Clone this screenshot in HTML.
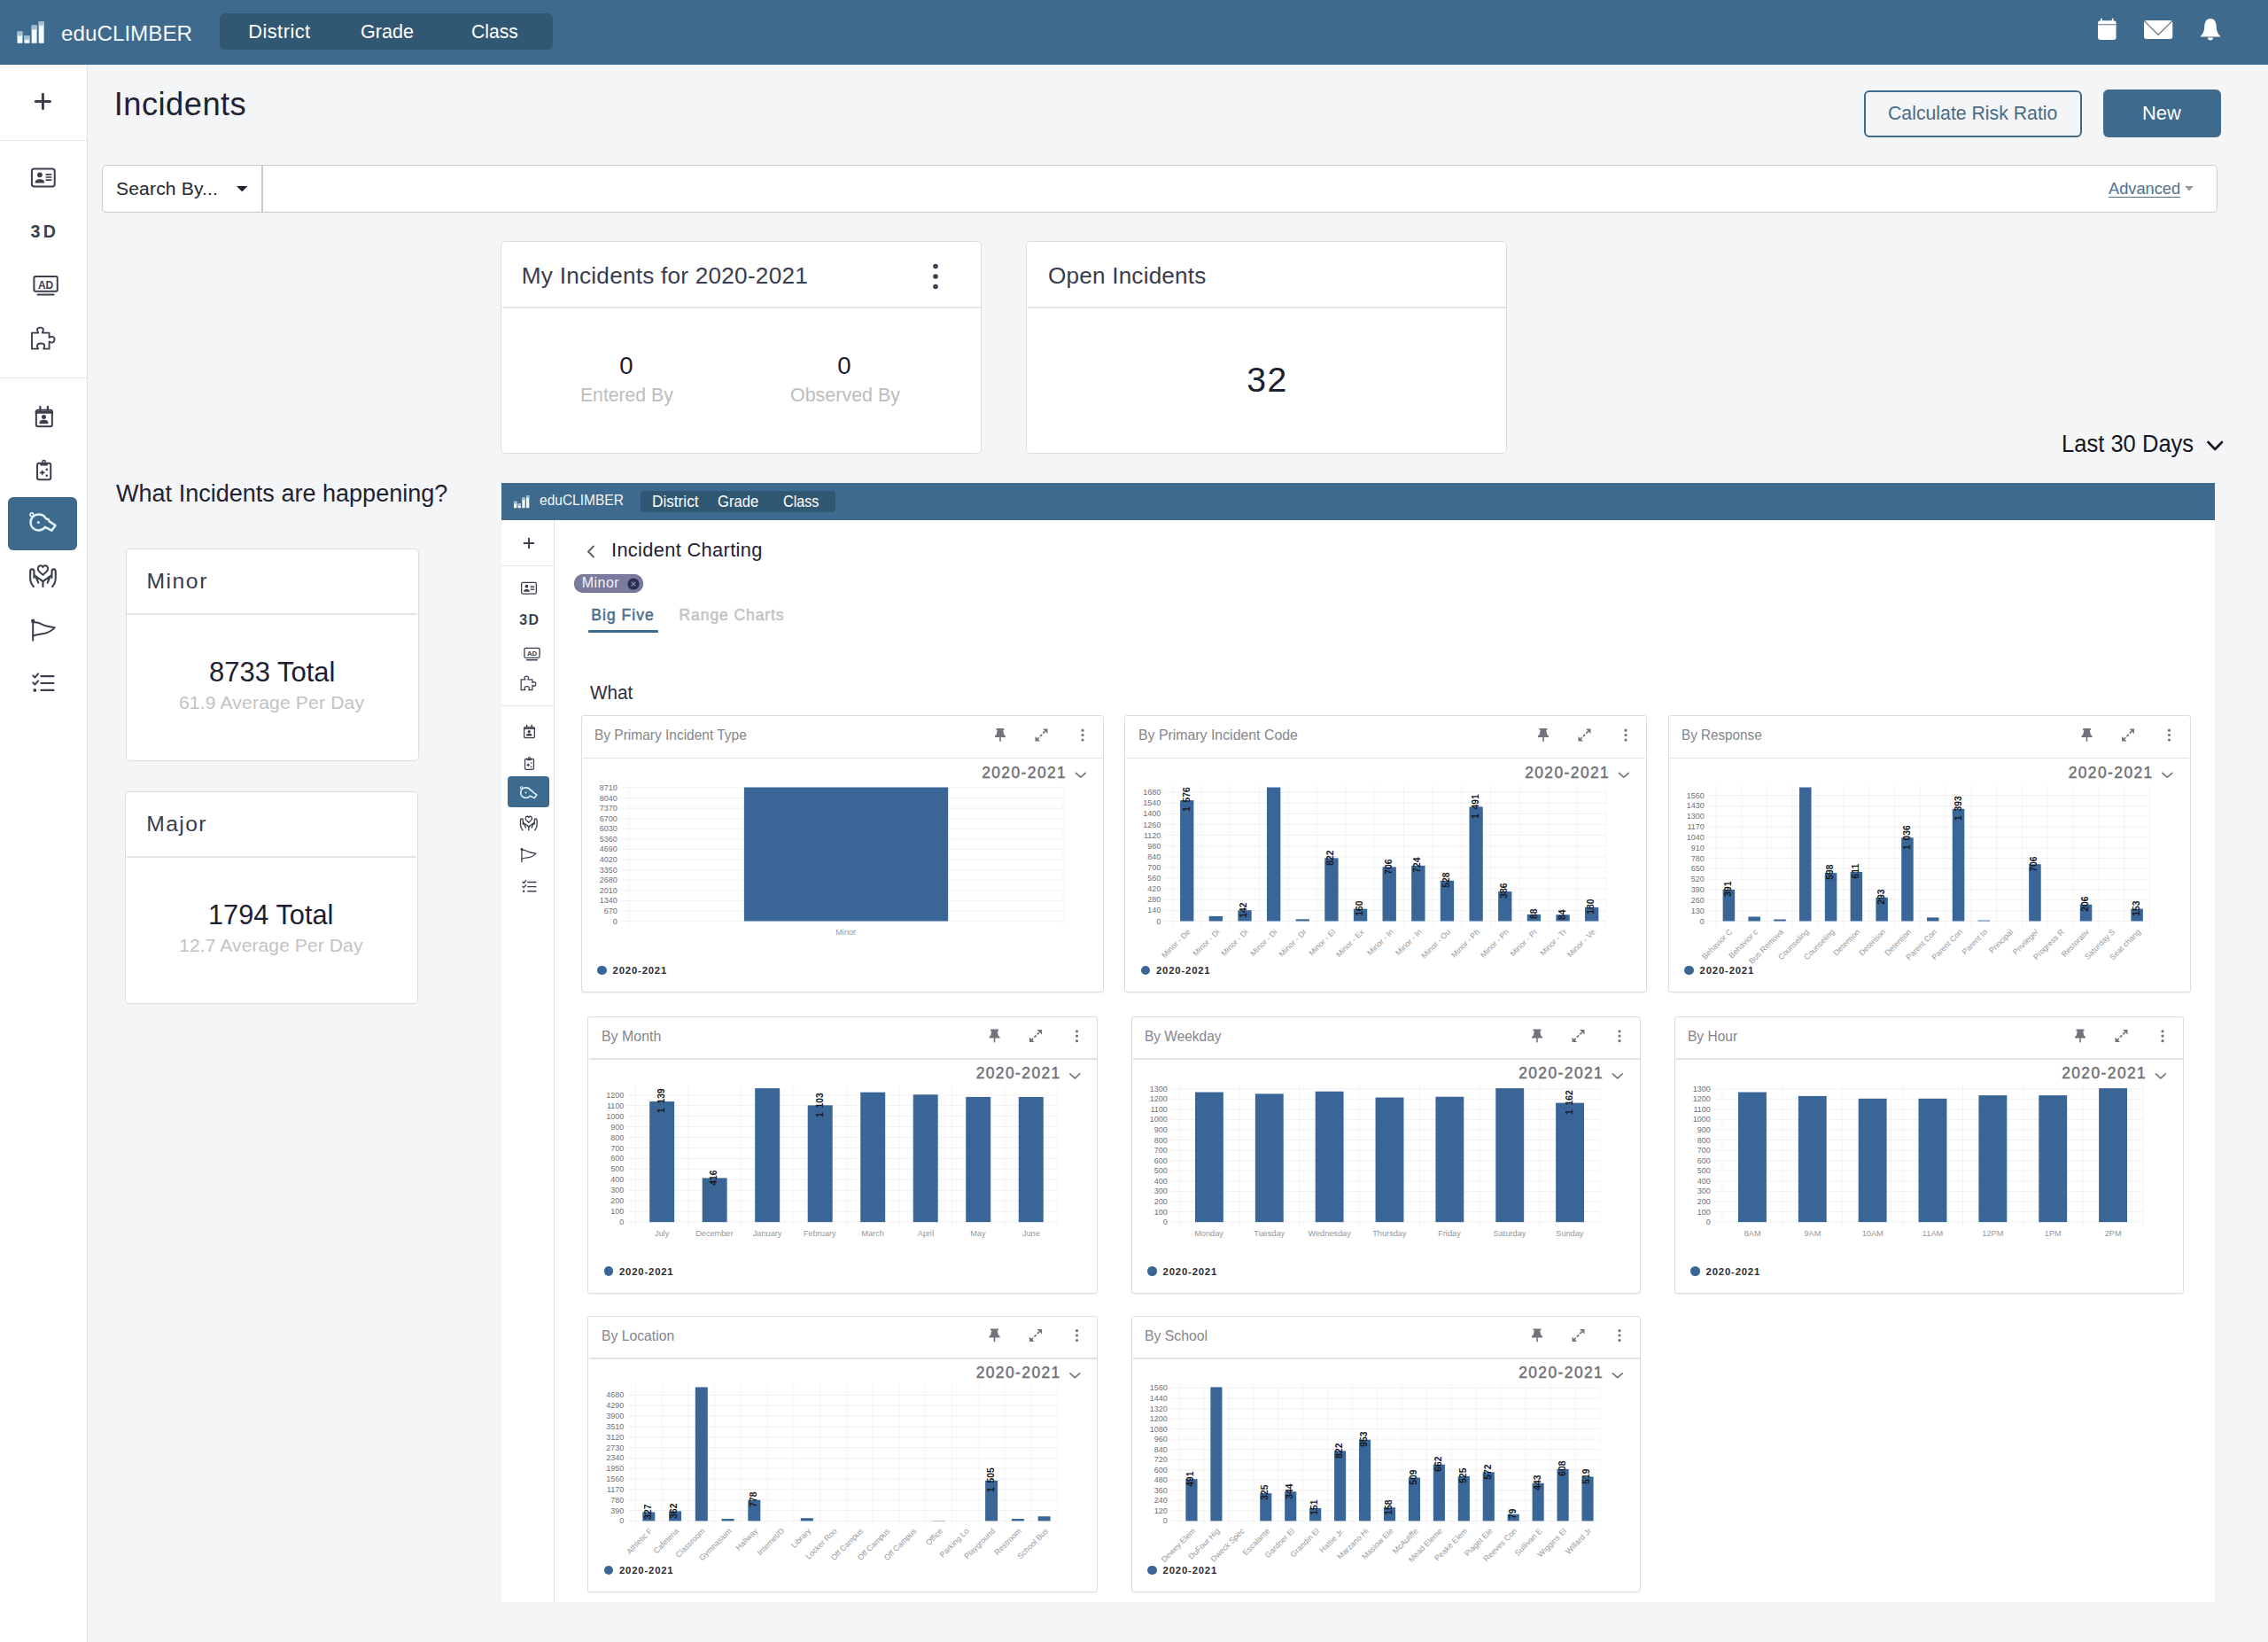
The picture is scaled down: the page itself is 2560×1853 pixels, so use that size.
<!DOCTYPE html><html><head><meta charset="utf-8"><style>
html,body{margin:0;padding:0}
body{width:2560px;height:1853px;overflow:hidden;position:relative;background:#f4f5f7;font-family:"Liberation Sans",sans-serif}
.t{position:absolute;white-space:nowrap;line-height:1;font-family:"Liberation Sans",sans-serif}
svg{overflow:visible}
</style></head><body>
<div style="position:absolute;left:0px;top:0px;width:2560px;height:73px;background:#3e6a8d"></div>
<svg style="position:absolute;left:15px;top:20px;" width="40" height="32" viewBox="0 0 40 32"><defs><linearGradient id="lg" x1="0" y1="0" x2="0" y2="1"><stop offset="0" stop-color="#98b9d3"/><stop offset="0.7" stop-color="#a9bfcf"/><stop offset="1" stop-color="#f2fbff"/></linearGradient></defs><rect x="4.5" y="15.6" width="5.9" height="13.200000000000001" rx="0.6" fill="#f4fbff"/><rect x="4.5" y="15.6" width="5.9" height="6" rx="0.6" fill="url(#lg)"/><rect x="12.5" y="20.0" width="5.9" height="8.8" rx="0.6" fill="#f4fbff"/><rect x="12.5" y="20.0" width="5.9" height="6" rx="0.6" fill="url(#lg)"/><rect x="20.7" y="8.4" width="5.9" height="20.4" rx="0.6" fill="#f4fbff"/><rect x="20.7" y="8.4" width="5.9" height="6" rx="0.6" fill="url(#lg)"/><rect x="28.7" y="3.9" width="5.9" height="24.900000000000002" rx="0.6" fill="#f4fbff"/><rect x="28.7" y="3.9" width="5.9" height="6" rx="0.6" fill="url(#lg)"/></svg>
<div class="t" style="left:68.98px;top:25.65px;font-size:24.71px;color:#f4f8fb;transform:scaleX(0.9805);transform-origin:0 0;">eduCLIMBER</div>
<div style="position:absolute;left:248px;top:15px;width:376px;height:41px;background:#315872;border-radius:6px"></div>
<div class="t" style="left:280.21px;top:25.01px;font-size:21.80px;color:#ffffff;letter-spacing:0.476px;">District</div>
<div class="t" style="left:406.92px;top:25.01px;font-size:21.80px;color:#ffffff;transform:scaleX(0.9908);transform-origin:0 0;">Grade</div>
<div class="t" style="left:531.94px;top:25.01px;font-size:21.80px;color:#ffffff;transform:scaleX(0.9686);transform-origin:0 0;">Class</div>
<svg style="position:absolute;left:2368px;top:20px;" width="21" height="25" viewBox="0 0 21 25"><rect x="0" y="3.2" width="20.6" height="21.7" rx="3" fill="#fff"/><rect x="3.2" y="0.4" width="1.6" height="4" rx="0.8" fill="#fff"/><rect x="15.9" y="0.4" width="1.6" height="4" rx="0.8" fill="#fff"/><rect x="0" y="7.1" width="20.6" height="1.2" fill="#7c8a96"/></svg>
<svg style="position:absolute;left:2420px;top:22.7px;" width="32.3" height="21" viewBox="0 0 32.3 21"><rect x="0" y="0" width="32.3" height="20.9" rx="3" fill="#fff"/><path d="M0.3 0.6 L16.15 16.3 L32 0.6" fill="none" stroke="#737a80" stroke-width="1.3"/></svg>
<svg style="position:absolute;left:2483px;top:20.5px;" width="24" height="25" viewBox="0 0 24 25"><path d="M12 0 C7.2 0 5.4 4.2 5.2 9.5 C5 14.5 3.6 17 0.4 20.4 L23.6 20.4 C20.4 17 19 14.5 18.8 9.5 C18.6 4.2 16.8 0 12 0Z" fill="#fff"/><path d="M8.9 21.4 H15.1 C15.1 23.2 13.8 24.5 12 24.5 C10.2 24.5 8.9 23.2 8.9 21.4Z" fill="#fff"/></svg>
<div style="position:absolute;left:0px;top:73px;width:98px;height:1780px;background:#fff;border-right:1px solid #e2e3e6"></div>
<div style="position:absolute;left:0px;top:158px;width:98px;height:1px;background:#e2e3e6"></div>
<div style="position:absolute;left:0px;top:426px;width:98px;height:1px;background:#e2e3e6"></div>
<div style="position:absolute;left:9px;top:561px;width:78px;height:60px;background:#3e6a8d;border-radius:6px"></div>
<svg style="position:absolute;left:0;top:0" width="2560" height="1853"><g transform="translate(48.4,114.4) scale(1.0)" fill="none" stroke="#3b3f4e" stroke-linecap="round" stroke-linejoin="round"><path d="M0 -8.1 V8.1 M-8.1 0 H8.1" stroke-width="3"/></g><g transform="translate(48.8,200.5) scale(1.0)" fill="none" stroke="#3b3f4e" stroke-linecap="round" stroke-linejoin="round"><rect x="-12.9" y="-9.9" width="25.8" height="19.8" rx="2.6" stroke-width="2"/><circle cx="-3.9" cy="-3.2" r="2.9" fill="#3b3f4e" stroke="none"/><path d="M-9.2 6 C-9.2 2.5 -6.5 1.8 -3.9 1.8 C-1.3 1.8 1.4 2.5 1.4 6 Z" fill="#3b3f4e" stroke="none"/><path d="M3.3 -3.6 H9 M3.3 -0.5 H9 M3.3 2.6 H9" stroke-width="1.6"/></g><g transform="translate(51.6,322.2) scale(1.0)" fill="none" stroke="#3b3f4e" stroke-linecap="round" stroke-linejoin="round"><rect x="-13.2" y="-10.3" width="26.4" height="16.9" rx="1.8" stroke-width="2"/><path d="M-9 10.3 H9" stroke-width="2.2"/><text x="0" y="3.4" text-anchor="middle" font-family="Liberation Sans" font-weight="bold" font-size="12" fill="#3b3f4e" stroke="none">AD</text></g><g transform="translate(48.75,381.85) scale(1.0)" fill="none" stroke="#3b3f4e" stroke-linecap="round" stroke-linejoin="round"><path d="M-12.8 -6.2 H-5.5 C-6.5 -8 -6.8 -8.6 -6.8 -9.5 C-6.8 -11.3 -5 -12.2 -3.3 -12.2 C-1.6 -12.2 0.2 -11.3 0.2 -9.5 C0.2 -8.6 -0.1 -8 -1 -6.2 H6.8 V-0.8 C8.5 -1.8 9 -2 9.9 -2 C11.6 -2 12.7 -0.3 12.7 1.4 C12.7 3.1 11.6 4.8 9.9 4.8 C9 4.8 8.5 4.6 6.8 3.6 V11.8 H0.4 C1.3 10.2 1.5 9.5 1.5 8.6 C1.5 6.9 0 5.6 -2.7 5.6 C-5.4 5.6 -6.8 6.9 -6.8 8.6 C-6.8 9.5 -6.5 10.2 -5.7 11.8 H-12.8 Z" stroke-width="1.9"/></g><g transform="translate(49.85,469.95) scale(1.0)" fill="none" stroke="#3b3f4e" stroke-linecap="round" stroke-linejoin="round"><rect x="-9" y="-7.2" width="18" height="18.6" rx="2" stroke-width="2"/><path d="M-9 -4.6 H9" stroke-width="2.6"/><path d="M-4.5 -11 V-7 M4 -11 V-7" stroke-width="2.2"/><circle cx="-0.4" cy="0.5" r="2.5" fill="#3b3f4e" stroke="none"/><path d="M-5.4 8.2 C-5.4 4.6 -3.2 3.9 -0.4 3.9 C2.4 3.9 4.6 4.6 4.6 8.2 Z" fill="#3b3f4e" stroke="none"/></g><g transform="translate(49.65,530.35) scale(1.0)" fill="none" stroke="#3b3f4e" stroke-linecap="round" stroke-linejoin="round"><rect x="-7.6" y="-7.6" width="15.2" height="18.4" rx="1.8" stroke-width="2"/><path d="M-3.6 -7.5 H3.6 V-5.6 H-3.6 Z" fill="#3b3f4e" stroke-width="1.5"/><circle cx="-0.1" cy="-9.1" r="1.7" stroke-width="1.5"/><path d="M-1.9 -0.3 Q-1.4 2.6 1.6 3.1 Q-1.4 3.6 -1.9 6.5 Q-2.4 3.6 -5.4 3.1 Q-2.4 2.6 -1.9 -0.3Z" fill="#3b3f4e" stroke="none"/><circle cx="3.1" cy="-0.5" r="1.3" fill="#3b3f4e" stroke="none"/><circle cx="3.1" cy="6.4" r="1.3" fill="#3b3f4e" stroke="none"/></g><g transform="translate(48.5,588.5) scale(1.0)" fill="none" stroke="#e0f4ff" stroke-linecap="round" stroke-linejoin="round"><path d="M3.4 -3.2 C1.6 -6.4 -1.6 -7.9 -5 -7.9 C-10.1 -7.9 -14 -4.1 -14 1.0 C-14 6.1 -10.1 9.9 -5 9.9 C-1.8 9.9 0.6 8.6 2.4 6.4 L9.8 10.2 L14 4.4 L7 -0.2 L6.2 -2.2 Z" stroke-width="2.5"/><circle cx="-5.1" cy="0.9" r="1.5" fill="#e0f4ff" stroke="none"/><circle cx="-12.6" cy="-7.7" r="1.9" stroke-width="1.6"/></g><g transform="translate(48.45,650.1) scale(1.0)" fill="none" stroke="#3b3f4e" stroke-linecap="round" stroke-linejoin="round"><path d="M0 -1.2 L-4.6 -5.6 C-6.6 -7.6 -5.6 -11.9 -2.6 -11.9 C-1.4 -11.9 -0.5 -11.1 0 -10.2 C0.5 -11.1 1.4 -11.9 2.6 -11.9 C5.6 -11.9 6.6 -7.6 4.6 -5.6 Z" stroke-width="2"/><path transform="scale(1,1)" d="M-10.6 11.9 C-13.2 9.2 -14.3 6.2 -14.3 2.2 V-5.2 C-14.3 -6.8 -13.4 -7.7 -12.2 -7.7 C-11 -7.7 -10 -6.8 -10 -5.2 V1.8 M-9.4 -0.8 L0 6 M-7.6 1.8 L-5.2 7.6" stroke-width="2.1"/><path transform="scale(-1,1)" d="M-10.6 11.9 C-13.2 9.2 -14.3 6.2 -14.3 2.2 V-5.2 C-14.3 -6.8 -13.4 -7.7 -12.2 -7.7 C-11 -7.7 -10 -6.8 -10 -5.2 V1.8 M-9.4 -0.8 L0 6 M-7.6 1.8 L-5.2 7.6" stroke-width="2.1"/><path d="M0 5.8 V11.9" stroke-width="2.1"/></g><g transform="translate(49.6,711) scale(1.0)" fill="none" stroke="#3b3f4e" stroke-linecap="round" stroke-linejoin="round"><path d="M-12.4 -10 V11.7" stroke-width="2"/><circle cx="-12.4" cy="-10.3" r="2.2" fill="#3b3f4e" stroke="none"/><path d="M-12.4 -8.6 C-7 -9.5 -4.5 -7.7 -2 -6.3 C1 -4.7 4 -3.6 12.3 -2.8 C8.5 1.3 5 3.2 0 4 C-5 4.8 -9 5 -12.4 6.6" stroke-width="1.9"/></g><g transform="translate(48.6,770) scale(1.0)" fill="none" stroke="#3b3f4e" stroke-linecap="round" stroke-linejoin="round"><path d="M-11.3 -7.5 L-9.2 -5.4 L-5.5 -9.6 M-11.3 0.4 L-9.2 2.5 L-5.5 -1.6" stroke-width="2"/><circle cx="-9.3" cy="8.9" r="1.9" fill="#3b3f4e" stroke="none"/><path d="M-2.2 -6.9 H11.9 M-2.2 1 H11.9 M-2.2 8.9 H11.9" stroke-width="2.2"/></g></svg>
<div class="t" style="left:34.57px;top:251.96px;font-size:19.62px;color:#3b3f4e;font-weight:bold;letter-spacing:3.159px;">3D</div>
<div class="t" style="left:128.66px;top:99.79px;font-size:36.34px;color:#1f2230;letter-spacing:0.466px;">Incidents</div>
<div style="position:absolute;left:2104px;top:101.5px;width:246px;height:53.5px;border:2px solid #3e6a8d;border-radius:6px;box-sizing:border-box"></div>
<div class="t" style="left:2131.44px;top:117.02px;font-size:22.38px;color:#4a6b86;transform:scaleX(0.9500);transform-origin:0 0;">Calculate Risk Ratio</div>
<div style="position:absolute;left:2374px;top:101px;width:132.5px;height:54px;background:#3e6a8d;border-radius:6px"></div>
<div class="t" style="left:2418.21px;top:117.02px;font-size:22.38px;color:#ffffff;transform:scaleX(0.9768);transform-origin:0 0;">New</div>
<div style="position:absolute;left:114.5px;top:186px;width:2388.1px;height:53.599999999999994px;background:#fff;border:1.5px solid #c9cbd0;border-radius:5px;box-sizing:border-box"></div>
<div style="position:absolute;left:295px;top:186px;width:1.5px;height:53.599999999999994px;background:#c9cbd0"></div>
<div class="t" style="left:131.05px;top:202.43px;font-size:21.08px;color:#23252f;letter-spacing:0.148px;">Search By...</div>
<svg style="position:absolute;left:267px;top:210px;" width="13" height="6.5" viewBox="0 0 13 6.5"><path d="M0 0 H12.5 L6.25 6.2 Z" fill="#1d1f2b"/></svg>
<div class="t" style="left:2380.46px;top:203.67px;font-size:18.31px;color:#4f7190;transform:scaleX(0.9969);transform-origin:0 0;text-decoration:underline;text-underline-offset:3px;">Advanced</div>
<svg style="position:absolute;left:2466px;top:210px;" width="10" height="6" viewBox="0 0 10 6"><path d="M0 0 H10 L5 5.5 Z" fill="#9a9a9a"/></svg>
<div style="position:absolute;left:565px;top:272px;width:543px;height:240px;background:#fff;border:1.5px solid #dcdde1;border-radius:5px;box-sizing:border-box"></div>
<div style="position:absolute;left:566.5px;top:346px;width:540.0px;height:1.5px;background:#e3e4e8"></div>
<div class="t" style="left:588.85px;top:298.41px;font-size:26.16px;color:#383d50;letter-spacing:0.238px;">My Incidents for 2020-2021</div>
<svg style="position:absolute;left:1052px;top:296px;" width="8" height="32" viewBox="0 0 8 32"><circle cx="4" cy="4.5" r="2.8" fill="#383d50"/><circle cx="4" cy="16" r="2.8" fill="#383d50"/><circle cx="4" cy="27.5" r="2.8" fill="#383d50"/></svg>
<div class="t" style="left:699.31px;top:399.18px;font-size:27.62px;color:#1d2030;">0</div>
<div class="t" style="left:945.31px;top:399.18px;font-size:27.62px;color:#1d2030;">0</div>
<div class="t" style="left:654.76px;top:435.00px;font-size:22.53px;color:#bdbdbd;transform:scaleX(0.9401);transform-origin:0 0;">Entered By</div>
<div class="t" style="left:891.99px;top:435.00px;font-size:22.53px;color:#bdbdbd;transform:scaleX(0.9526);transform-origin:0 0;">Observed By</div>
<div style="position:absolute;left:1158px;top:272px;width:543px;height:240px;background:#fff;border:1.5px solid #dcdde1;border-radius:5px;box-sizing:border-box"></div>
<div style="position:absolute;left:1159.5px;top:346px;width:540.0px;height:1.5px;background:#e3e4e8"></div>
<div class="t" style="left:1182.97px;top:298.41px;font-size:26.16px;color:#383d50;letter-spacing:0.190px;">Open Incidents</div>
<div class="t" style="left:1407.26px;top:409.32px;font-size:39.24px;color:#1d2030;letter-spacing:1.314px;">32</div>
<div class="t" style="left:130.89px;top:542.17px;font-size:28.34px;color:#1f2230;transform:scaleX(0.9547);transform-origin:0 0;">What Incidents are happening?</div>
<div style="position:absolute;left:141.5px;top:618.7px;width:331.3px;height:240.5999999999999px;background:#fff;border:1.5px solid #dcdde1;border-radius:5px;box-sizing:border-box"></div>
<div style="position:absolute;left:143px;top:692px;width:327.5px;height:1.5px;background:#e3e4e8"></div>
<div class="t" style="left:165.47px;top:643.65px;font-size:24.71px;color:#383d50;letter-spacing:1.531px;">Minor</div>
<div class="t" style="left:235.67px;top:742.48px;font-size:31.98px;color:#1d2030;transform:scaleX(0.9686);transform-origin:0 0;">8733 Total</div>
<div class="t" style="left:201.95px;top:782.23px;font-size:21.08px;color:#c3c3c3;letter-spacing:0.172px;">61.9 Average Per Day</div>
<div style="position:absolute;left:141px;top:892.7px;width:330.8px;height:240.79999999999995px;background:#fff;border:1.5px solid #dcdde1;border-radius:5px;box-sizing:border-box"></div>
<div style="position:absolute;left:142.5px;top:966.3px;width:327.0px;height:1.5px;background:#e3e4e8"></div>
<div class="t" style="left:165.17px;top:917.65px;font-size:24.71px;color:#383d50;letter-spacing:1.406px;">Major</div>
<div class="t" style="left:235.16px;top:1016.80px;font-size:31.25px;color:#1d2030;transform:scaleX(0.9841);transform-origin:0 0;">1794 Total</div>
<div class="t" style="left:202.20px;top:1056.03px;font-size:21.08px;color:#c3c3c3;letter-spacing:0.075px;">12.7 Average Per Day</div>
<div class="t" style="left:2326.70px;top:487.80px;font-size:26.89px;color:#15171f;transform:scaleX(0.9509);transform-origin:0 0;">Last 30 Days</div>
<svg style="position:absolute;left:2491px;top:497px;" width="19" height="13" viewBox="0 0 19 13"><path d="M1.5 2 L9.2 10 L17 2" fill="none" stroke="#15171f" stroke-width="2.6" stroke-linecap="round" stroke-linejoin="round"/></svg>
<div style="position:absolute;left:566px;top:545px;width:1934px;height:42px;background:#3e6a8d"></div>
<div style="position:absolute;left:566px;top:587px;width:1934px;height:1221px;background:#fff"></div>
<svg style="position:absolute;left:0;top:0" width="2560" height="1853"><g transform="translate(580,559) scale(0.575) translate(-19.5,-23.9)"><g transform="translate(15,20)"><defs><linearGradient id="lg2" x1="0" y1="0" x2="0" y2="1"><stop offset="0" stop-color="#98b9d3"/><stop offset="0.7" stop-color="#a9bfcf"/><stop offset="1" stop-color="#f2fbff"/></linearGradient></defs><rect x="4.5" y="15.6" width="5.9" height="13.200000000000001" rx="0.6" fill="#f4fbff"/><rect x="4.5" y="15.6" width="5.9" height="6" rx="0.6" fill="url(#lg2)"/><rect x="12.5" y="20.0" width="5.9" height="8.8" rx="0.6" fill="#f4fbff"/><rect x="12.5" y="20.0" width="5.9" height="6" rx="0.6" fill="url(#lg2)"/><rect x="20.7" y="8.4" width="5.9" height="20.4" rx="0.6" fill="#f4fbff"/><rect x="20.7" y="8.4" width="5.9" height="6" rx="0.6" fill="url(#lg2)"/><rect x="28.7" y="3.9" width="5.9" height="24.900000000000002" rx="0.6" fill="#f4fbff"/><rect x="28.7" y="3.9" width="5.9" height="6" rx="0.6" fill="url(#lg2)"/></g></g></svg>
<div class="t" style="left:608.85px;top:557.30px;font-size:16.86px;color:#f4f8fb;transform:scaleX(0.9203);transform-origin:0 0;">eduCLIMBER</div>
<div style="position:absolute;left:723px;top:554px;width:220px;height:24px;background:#315872;border-radius:4px"></div>
<div class="t" style="left:735.59px;top:557.51px;font-size:17.44px;color:#ffffff;transform:scaleX(0.9858);transform-origin:0 0;">District</div>
<div class="t" style="left:810.17px;top:557.51px;font-size:17.44px;color:#ffffff;transform:scaleX(0.9524);transform-origin:0 0;">Grade</div>
<div class="t" style="left:884.19px;top:557.51px;font-size:17.44px;color:#ffffff;transform:scaleX(0.9259);transform-origin:0 0;">Class</div>
<div style="position:absolute;left:625px;top:587px;width:1px;height:1221px;background:#e2e3e6"></div>
<div style="position:absolute;left:566px;top:638px;width:59px;height:1px;background:#e2e3e6"></div>
<div style="position:absolute;left:566px;top:796px;width:59px;height:1px;background:#e2e3e6"></div>
<div style="position:absolute;left:573px;top:876px;width:46.5px;height:35px;background:#3e6a8d;border-radius:4px"></div>
<svg style="position:absolute;left:0;top:0" width="2560" height="1853"><g transform="translate(597,613) scale(0.65)" fill="none" stroke="#3b3f4e" stroke-linecap="round" stroke-linejoin="round"><path d="M0 -8.1 V8.1 M-8.1 0 H8.1" stroke-width="3"/></g><g transform="translate(597,663.75) scale(0.65)" fill="none" stroke="#3b3f4e" stroke-linecap="round" stroke-linejoin="round"><rect x="-12.9" y="-9.9" width="25.8" height="19.8" rx="2.6" stroke-width="2"/><circle cx="-3.9" cy="-3.2" r="2.9" fill="#3b3f4e" stroke="none"/><path d="M-9.2 6 C-9.2 2.5 -6.5 1.8 -3.9 1.8 C-1.3 1.8 1.4 2.5 1.4 6 Z" fill="#3b3f4e" stroke="none"/><path d="M3.3 -3.6 H9 M3.3 -0.5 H9 M3.3 2.6 H9" stroke-width="1.6"/></g><g transform="translate(600.5,738) scale(0.65)" fill="none" stroke="#3b3f4e" stroke-linecap="round" stroke-linejoin="round"><rect x="-13.2" y="-10.3" width="26.4" height="16.9" rx="1.8" stroke-width="2"/><path d="M-9 10.3 H9" stroke-width="2.2"/><text x="0" y="3.4" text-anchor="middle" font-family="Liberation Sans" font-weight="bold" font-size="12" fill="#3b3f4e" stroke="none">AD</text></g><g transform="translate(596.5,771) scale(0.65)" fill="none" stroke="#3b3f4e" stroke-linecap="round" stroke-linejoin="round"><path d="M-12.8 -6.2 H-5.5 C-6.5 -8 -6.8 -8.6 -6.8 -9.5 C-6.8 -11.3 -5 -12.2 -3.3 -12.2 C-1.6 -12.2 0.2 -11.3 0.2 -9.5 C0.2 -8.6 -0.1 -8 -1 -6.2 H6.8 V-0.8 C8.5 -1.8 9 -2 9.9 -2 C11.6 -2 12.7 -0.3 12.7 1.4 C12.7 3.1 11.6 4.8 9.9 4.8 C9 4.8 8.5 4.6 6.8 3.6 V11.8 H0.4 C1.3 10.2 1.5 9.5 1.5 8.6 C1.5 6.9 0 5.6 -2.7 5.6 C-5.4 5.6 -6.8 6.9 -6.8 8.6 C-6.8 9.5 -6.5 10.2 -5.7 11.8 H-12.8 Z" stroke-width="1.9"/></g><g transform="translate(597.5,825.25) scale(0.65)" fill="none" stroke="#3b3f4e" stroke-linecap="round" stroke-linejoin="round"><rect x="-9" y="-7.2" width="18" height="18.6" rx="2" stroke-width="2"/><path d="M-9 -4.6 H9" stroke-width="2.6"/><path d="M-4.5 -11 V-7 M4 -11 V-7" stroke-width="2.2"/><circle cx="-0.4" cy="0.5" r="2.5" fill="#3b3f4e" stroke="none"/><path d="M-5.4 8.2 C-5.4 4.6 -3.2 3.9 -0.4 3.9 C2.4 3.9 4.6 4.6 4.6 8.2 Z" fill="#3b3f4e" stroke="none"/></g><g transform="translate(597.5,861.3) scale(0.65)" fill="none" stroke="#3b3f4e" stroke-linecap="round" stroke-linejoin="round"><rect x="-7.6" y="-7.6" width="15.2" height="18.4" rx="1.8" stroke-width="2"/><path d="M-3.6 -7.5 H3.6 V-5.6 H-3.6 Z" fill="#3b3f4e" stroke-width="1.5"/><circle cx="-0.1" cy="-9.1" r="1.7" stroke-width="1.5"/><path d="M-1.9 -0.3 Q-1.4 2.6 1.6 3.1 Q-1.4 3.6 -1.9 6.5 Q-2.4 3.6 -5.4 3.1 Q-2.4 2.6 -1.9 -0.3Z" fill="#3b3f4e" stroke="none"/><circle cx="3.1" cy="-0.5" r="1.3" fill="#3b3f4e" stroke="none"/><circle cx="3.1" cy="6.4" r="1.3" fill="#3b3f4e" stroke="none"/></g><g transform="translate(596.8,894) scale(0.65)" fill="none" stroke="#e0f4ff" stroke-linecap="round" stroke-linejoin="round"><path d="M3.4 -3.2 C1.6 -6.4 -1.6 -7.9 -5 -7.9 C-10.1 -7.9 -14 -4.1 -14 1.0 C-14 6.1 -10.1 9.9 -5 9.9 C-1.8 9.9 0.6 8.6 2.4 6.4 L9.8 10.2 L14 4.4 L7 -0.2 L6.2 -2.2 Z" stroke-width="2.5"/><circle cx="-5.1" cy="0.9" r="1.5" fill="#e0f4ff" stroke="none"/><circle cx="-12.6" cy="-7.7" r="1.9" stroke-width="1.6"/></g><g transform="translate(596.8,929) scale(0.65)" fill="none" stroke="#3b3f4e" stroke-linecap="round" stroke-linejoin="round"><path d="M0 -1.2 L-4.6 -5.6 C-6.6 -7.6 -5.6 -11.9 -2.6 -11.9 C-1.4 -11.9 -0.5 -11.1 0 -10.2 C0.5 -11.1 1.4 -11.9 2.6 -11.9 C5.6 -11.9 6.6 -7.6 4.6 -5.6 Z" stroke-width="2"/><path transform="scale(1,1)" d="M-10.6 11.9 C-13.2 9.2 -14.3 6.2 -14.3 2.2 V-5.2 C-14.3 -6.8 -13.4 -7.7 -12.2 -7.7 C-11 -7.7 -10 -6.8 -10 -5.2 V1.8 M-9.4 -0.8 L0 6 M-7.6 1.8 L-5.2 7.6" stroke-width="2.1"/><path transform="scale(-1,1)" d="M-10.6 11.9 C-13.2 9.2 -14.3 6.2 -14.3 2.2 V-5.2 C-14.3 -6.8 -13.4 -7.7 -12.2 -7.7 C-11 -7.7 -10 -6.8 -10 -5.2 V1.8 M-9.4 -0.8 L0 6 M-7.6 1.8 L-5.2 7.6" stroke-width="2.1"/><path d="M0 5.8 V11.9" stroke-width="2.1"/></g><g transform="translate(597,965) scale(0.65)" fill="none" stroke="#3b3f4e" stroke-linecap="round" stroke-linejoin="round"><path d="M-12.4 -10 V11.7" stroke-width="2"/><circle cx="-12.4" cy="-10.3" r="2.2" fill="#3b3f4e" stroke="none"/><path d="M-12.4 -8.6 C-7 -9.5 -4.5 -7.7 -2 -6.3 C1 -4.7 4 -3.6 12.3 -2.8 C8.5 1.3 5 3.2 0 4 C-5 4.8 -9 5 -12.4 6.6" stroke-width="1.9"/></g><g transform="translate(597.2,1000) scale(0.65)" fill="none" stroke="#3b3f4e" stroke-linecap="round" stroke-linejoin="round"><path d="M-11.3 -7.5 L-9.2 -5.4 L-5.5 -9.6 M-11.3 0.4 L-9.2 2.5 L-5.5 -1.6" stroke-width="2"/><circle cx="-9.3" cy="8.9" r="1.9" fill="#3b3f4e" stroke="none"/><path d="M-2.2 -6.9 H11.9 M-2.2 1 H11.9 M-2.2 8.9 H11.9" stroke-width="2.2"/></g></svg>
<div class="t" style="left:586.35px;top:691.64px;font-size:15.99px;color:#3b3f4e;font-weight:bold;letter-spacing:1.374px;">3D</div>
<svg style="position:absolute;left:662px;top:615px;" width="10" height="15" viewBox="0 0 10 15"><path d="M8 1.5 L2 7.5 L8 13.5" fill="none" stroke="#555a66" stroke-width="1.8" stroke-linecap="round" stroke-linejoin="round"/></svg>
<div class="t" style="left:689.99px;top:610.11px;font-size:21.80px;color:#1f2230;letter-spacing:0.348px;">Incident Charting</div>
<div style="position:absolute;left:648px;top:648.2px;width:77.60000000000002px;height:20.59999999999991px;background:#7a7b9e;border-radius:10.5px;box-shadow:inset 0 0 0 0.8px #6e6f8c"></div>
<div class="t" style="left:656.69px;top:650.24px;font-size:15.99px;color:#f2f2f7;letter-spacing:0.495px;">Minor</div>
<svg style="position:absolute;left:707.5px;top:652px;" width="14" height="14" viewBox="0 0 14 14"><circle cx="7" cy="7" r="6.6" fill="#2c3050"/><path d="M4.6 4.6 L9.4 9.4 M9.4 4.6 L4.6 9.4" stroke="#8b8cab" stroke-width="1.3"/></svg>
<div class="t" style="left:667.27px;top:685.81px;font-size:17.44px;color:#4b7090;letter-spacing:1.071px;-webkit-text-stroke:0.55px #4b7090;">Big Five</div>
<div style="position:absolute;left:663.5px;top:711px;width:79.5px;height:2.5px;background:#3e6a8d;border-radius:1px"></div>
<div class="t" style="left:766.57px;top:685.81px;font-size:17.44px;color:#c4c4c4;letter-spacing:0.949px;-webkit-text-stroke:0.55px #c4c4c4;">Range Charts</div>
<div class="t" style="left:666.42px;top:771.11px;font-size:21.80px;color:#2b2f42;transform:scaleX(0.9477);transform-origin:0 0;">What</div>
<div style="position:absolute;left:656px;top:807px;width:590px;height:313px;background:#fff;border:1.5px solid #dcdde0;border-radius:3px;box-sizing:border-box;box-shadow:0 1px 1px rgba(0,0,0,0.04)"></div>
<div style="position:absolute;left:657.5px;top:854.5px;width:587.0px;height:1.5px;background:#e1e2e5"></div>
<div class="t" style="left:671.33px;top:821.40px;font-size:16.28px;color:#85868b;transform:scaleX(0.9519);transform-origin:0 0;">By Primary Incident Type</div>
<svg style="position:absolute;left:0;top:0" width="2560" height="1853"><g fill="#72747c"><path d="M1124.5 822 H1133.5 V823.8 H1132.2 L1133.2 828.8 L1135 830.6 V832 H1123 V830.6 L1124.8 828.8 L1125.8 823.8 H1124.5 Z"/><rect x="1128.2" y="831.5" width="1.6" height="5.3"/><path d="M1168.5 836.5 L1168.5 831.0 L1174.0 836.5 Z M1182.5 822.5 L1177.0 822.5 L1182.5 828.0 Z"/><path d="M1170.5 834.5 L1180.5 824.5" stroke="#72747c" stroke-width="1.7" stroke-dasharray="3.2 1.6"/><circle cx="1222" cy="824.2" r="1.6"/><circle cx="1222" cy="829.5" r="1.6"/><circle cx="1222" cy="835.1" r="1.6"/></g><path d="M1214.4 872.3 L1219.8 877.2 L1225.2 872.3" fill="none" stroke="#72747c" stroke-width="1.6" stroke-linecap="round" stroke-linejoin="round"/></svg>
<div class="t" style="left:1108.13px;top:863.81px;font-size:17.44px;color:#6f7075;letter-spacing:1.413px;-webkit-text-stroke:0.45px #6f7075;">2020-2021</div>
<svg style="position:absolute;left:0;top:0" width="2560" height="1853"><line x1="701" y1="1039.50" x2="1200" y2="1039.50" stroke="#f1f1f1" stroke-width="1"/><line x1="701" y1="1027.92" x2="1200" y2="1027.92" stroke="#f1f1f1" stroke-width="1"/><line x1="701" y1="1016.33" x2="1200" y2="1016.33" stroke="#f1f1f1" stroke-width="1"/><line x1="701" y1="1004.75" x2="1200" y2="1004.75" stroke="#f1f1f1" stroke-width="1"/><line x1="701" y1="993.16" x2="1200" y2="993.16" stroke="#f1f1f1" stroke-width="1"/><line x1="701" y1="981.58" x2="1200" y2="981.58" stroke="#f1f1f1" stroke-width="1"/><line x1="701" y1="969.99" x2="1200" y2="969.99" stroke="#f1f1f1" stroke-width="1"/><line x1="701" y1="958.41" x2="1200" y2="958.41" stroke="#f1f1f1" stroke-width="1"/><line x1="701" y1="946.82" x2="1200" y2="946.82" stroke="#f1f1f1" stroke-width="1"/><line x1="701" y1="935.24" x2="1200" y2="935.24" stroke="#f1f1f1" stroke-width="1"/><line x1="701" y1="923.65" x2="1200" y2="923.65" stroke="#f1f1f1" stroke-width="1"/><line x1="701" y1="912.07" x2="1200" y2="912.07" stroke="#f1f1f1" stroke-width="1"/><line x1="701" y1="900.48" x2="1200" y2="900.48" stroke="#f1f1f1" stroke-width="1"/><line x1="701" y1="888.90" x2="1200" y2="888.90" stroke="#f1f1f1" stroke-width="1"/><line x1="710.00" y1="884.5" x2="710.00" y2="1045.5" stroke="#f5f5f5" stroke-width="1"/><line x1="1200.00" y1="884.5" x2="1200.00" y2="1045.5" stroke="#f5f5f5" stroke-width="1"/><rect x="839.85" y="888.50" width="230.30" height="151.00" fill="#3a6697"/></svg>
<div class="t" style="left:691.84px;top:1035.57px;font-size:9.00px;color:#6f7075;">0</div>
<div class="t" style="left:681.83px;top:1023.98px;font-size:9.00px;color:#6f7075;">670</div>
<div class="t" style="left:676.83px;top:1012.40px;font-size:9.00px;color:#6f7075;">1340</div>
<div class="t" style="left:676.83px;top:1000.81px;font-size:9.00px;color:#6f7075;">2010</div>
<div class="t" style="left:676.83px;top:989.23px;font-size:9.00px;color:#6f7075;">2680</div>
<div class="t" style="left:676.83px;top:977.64px;font-size:9.00px;color:#6f7075;">3350</div>
<div class="t" style="left:676.83px;top:966.06px;font-size:9.00px;color:#6f7075;">4020</div>
<div class="t" style="left:676.83px;top:954.47px;font-size:9.00px;color:#6f7075;">4690</div>
<div class="t" style="left:676.83px;top:942.89px;font-size:9.00px;color:#6f7075;">5360</div>
<div class="t" style="left:676.83px;top:931.30px;font-size:9.00px;color:#6f7075;">6030</div>
<div class="t" style="left:676.83px;top:919.72px;font-size:9.00px;color:#6f7075;">6700</div>
<div class="t" style="left:676.83px;top:908.14px;font-size:9.00px;color:#6f7075;">7370</div>
<div class="t" style="left:676.83px;top:896.55px;font-size:9.00px;color:#6f7075;">8040</div>
<div class="t" style="left:676.83px;top:884.97px;font-size:9.00px;color:#6f7075;">8710</div>
<div class="t" style="left:943.19px;top:1048.30px;font-size:9.20px;color:#95969b;">Minor</div>
<div style="position:absolute;left:674.2px;top:1089.7px;width:10.6px;height:10.6px;border-radius:50%;background:#3a6697"></div>
<div class="t" style="left:691.61px;top:1089.99px;font-size:11.34px;color:#2b2c31;font-weight:bold;letter-spacing:0.810px;">2020-2021</div>
<div style="position:absolute;left:1269.4px;top:807px;width:589.5999999999999px;height:313px;background:#fff;border:1.5px solid #dcdde0;border-radius:3px;box-sizing:border-box;box-shadow:0 1px 1px rgba(0,0,0,0.04)"></div>
<div style="position:absolute;left:1270.9px;top:854.5px;width:586.5999999999999px;height:1.5px;background:#e1e2e5"></div>
<div class="t" style="left:1284.70px;top:821.40px;font-size:16.28px;color:#85868b;transform:scaleX(0.9752);transform-origin:0 0;">By Primary Incident Code</div>
<svg style="position:absolute;left:0;top:0" width="2560" height="1853"><g fill="#72747c"><path d="M1737.5 822 H1746.5 V823.8 H1745.2 L1746.2 828.8 L1748 830.6 V832 H1736 V830.6 L1737.8 828.8 L1738.8 823.8 H1737.5 Z"/><rect x="1741.2" y="831.5" width="1.6" height="5.3"/><path d="M1781.5 836.5 L1781.5 831.0 L1787.0 836.5 Z M1795.5 822.5 L1790.0 822.5 L1795.5 828.0 Z"/><path d="M1783.5 834.5 L1793.5 824.5" stroke="#72747c" stroke-width="1.7" stroke-dasharray="3.2 1.6"/><circle cx="1835" cy="824.2" r="1.6"/><circle cx="1835" cy="829.5" r="1.6"/><circle cx="1835" cy="835.1" r="1.6"/></g><path d="M1827.4 872.3 L1832.8 877.2 L1838.2 872.3" fill="none" stroke="#72747c" stroke-width="1.6" stroke-linecap="round" stroke-linejoin="round"/></svg>
<div class="t" style="left:1721.13px;top:863.81px;font-size:17.44px;color:#6f7075;letter-spacing:1.413px;-webkit-text-stroke:0.45px #6f7075;">2020-2021</div>
<svg style="position:absolute;left:0;top:0" width="2560" height="1853"><line x1="1314.4" y1="1039.50" x2="1813" y2="1039.50" stroke="#f1f1f1" stroke-width="1"/><line x1="1314.4" y1="1027.39" x2="1813" y2="1027.39" stroke="#f1f1f1" stroke-width="1"/><line x1="1314.4" y1="1015.27" x2="1813" y2="1015.27" stroke="#f1f1f1" stroke-width="1"/><line x1="1314.4" y1="1003.16" x2="1813" y2="1003.16" stroke="#f1f1f1" stroke-width="1"/><line x1="1314.4" y1="991.04" x2="1813" y2="991.04" stroke="#f1f1f1" stroke-width="1"/><line x1="1314.4" y1="978.93" x2="1813" y2="978.93" stroke="#f1f1f1" stroke-width="1"/><line x1="1314.4" y1="966.81" x2="1813" y2="966.81" stroke="#f1f1f1" stroke-width="1"/><line x1="1314.4" y1="954.70" x2="1813" y2="954.70" stroke="#f1f1f1" stroke-width="1"/><line x1="1314.4" y1="942.58" x2="1813" y2="942.58" stroke="#f1f1f1" stroke-width="1"/><line x1="1314.4" y1="930.47" x2="1813" y2="930.47" stroke="#f1f1f1" stroke-width="1"/><line x1="1314.4" y1="918.35" x2="1813" y2="918.35" stroke="#f1f1f1" stroke-width="1"/><line x1="1314.4" y1="906.24" x2="1813" y2="906.24" stroke="#f1f1f1" stroke-width="1"/><line x1="1314.4" y1="894.12" x2="1813" y2="894.12" stroke="#f1f1f1" stroke-width="1"/><line x1="1323.40" y1="884.5" x2="1323.40" y2="1045.5" stroke="#f5f5f5" stroke-width="1"/><line x1="1356.04" y1="884.5" x2="1356.04" y2="1045.5" stroke="#f5f5f5" stroke-width="1"/><line x1="1388.68" y1="884.5" x2="1388.68" y2="1045.5" stroke="#f5f5f5" stroke-width="1"/><line x1="1421.32" y1="884.5" x2="1421.32" y2="1045.5" stroke="#f5f5f5" stroke-width="1"/><line x1="1453.96" y1="884.5" x2="1453.96" y2="1045.5" stroke="#f5f5f5" stroke-width="1"/><line x1="1486.60" y1="884.5" x2="1486.60" y2="1045.5" stroke="#f5f5f5" stroke-width="1"/><line x1="1519.24" y1="884.5" x2="1519.24" y2="1045.5" stroke="#f5f5f5" stroke-width="1"/><line x1="1551.88" y1="884.5" x2="1551.88" y2="1045.5" stroke="#f5f5f5" stroke-width="1"/><line x1="1584.52" y1="884.5" x2="1584.52" y2="1045.5" stroke="#f5f5f5" stroke-width="1"/><line x1="1617.16" y1="884.5" x2="1617.16" y2="1045.5" stroke="#f5f5f5" stroke-width="1"/><line x1="1649.80" y1="884.5" x2="1649.80" y2="1045.5" stroke="#f5f5f5" stroke-width="1"/><line x1="1682.44" y1="884.5" x2="1682.44" y2="1045.5" stroke="#f5f5f5" stroke-width="1"/><line x1="1715.08" y1="884.5" x2="1715.08" y2="1045.5" stroke="#f5f5f5" stroke-width="1"/><line x1="1747.72" y1="884.5" x2="1747.72" y2="1045.5" stroke="#f5f5f5" stroke-width="1"/><line x1="1780.36" y1="884.5" x2="1780.36" y2="1045.5" stroke="#f5f5f5" stroke-width="1"/><line x1="1813.00" y1="884.5" x2="1813.00" y2="1045.5" stroke="#f5f5f5" stroke-width="1"/><rect x="1332.05" y="903.12" width="15.34" height="136.38" fill="#3a6697"/><rect x="1364.69" y="1033.88" width="15.34" height="5.62" fill="#3a6697"/><rect x="1397.33" y="1027.21" width="15.34" height="12.29" fill="#3a6697"/><rect x="1429.97" y="888.50" width="15.34" height="151.00" fill="#3a6697"/><rect x="1462.61" y="1037.34" width="15.34" height="2.16" fill="#3a6697"/><rect x="1495.25" y="968.37" width="15.34" height="71.13" fill="#3a6697"/><rect x="1527.89" y="1025.65" width="15.34" height="13.85" fill="#3a6697"/><rect x="1560.53" y="978.41" width="15.34" height="61.09" fill="#3a6697"/><rect x="1593.17" y="976.85" width="15.34" height="62.65" fill="#3a6697"/><rect x="1625.81" y="993.81" width="15.34" height="45.69" fill="#3a6697"/><rect x="1658.45" y="910.48" width="15.34" height="129.02" fill="#3a6697"/><rect x="1691.09" y="1006.10" width="15.34" height="33.40" fill="#3a6697"/><rect x="1723.73" y="1031.89" width="15.34" height="7.61" fill="#3a6697"/><rect x="1756.37" y="1032.23" width="15.34" height="7.27" fill="#3a6697"/><rect x="1789.01" y="1023.92" width="15.34" height="15.58" fill="#3a6697"/></svg>
<div class="t" style="left:1305.24px;top:1035.57px;font-size:9.00px;color:#6f7075;">0</div>
<div class="t" style="left:1295.23px;top:1023.45px;font-size:9.00px;color:#6f7075;">140</div>
<div class="t" style="left:1295.23px;top:1011.34px;font-size:9.00px;color:#6f7075;">280</div>
<div class="t" style="left:1295.23px;top:999.22px;font-size:9.00px;color:#6f7075;">420</div>
<div class="t" style="left:1295.23px;top:987.11px;font-size:9.00px;color:#6f7075;">560</div>
<div class="t" style="left:1295.23px;top:974.99px;font-size:9.00px;color:#6f7075;">700</div>
<div class="t" style="left:1295.23px;top:962.88px;font-size:9.00px;color:#6f7075;">840</div>
<div class="t" style="left:1295.23px;top:950.77px;font-size:9.00px;color:#6f7075;">980</div>
<div class="t" style="left:1290.89px;top:938.65px;font-size:9.00px;color:#6f7075;">1120</div>
<div class="t" style="left:1290.23px;top:926.54px;font-size:9.00px;color:#6f7075;">1260</div>
<div class="t" style="left:1290.23px;top:914.42px;font-size:9.00px;color:#6f7075;">1400</div>
<div class="t" style="left:1290.23px;top:902.31px;font-size:9.00px;color:#6f7075;">1540</div>
<div class="t" style="left:1290.23px;top:890.19px;font-size:9.00px;color:#6f7075;">1680</div>
<div class="t" style="left:1301.18px;top:1045.50px;font-size:8.9px;color:#97989d;transform-origin:100% 50%;transform:rotate(-45deg)">Minor - De</div>
<div class="t" style="left:1336.79px;top:1045.50px;font-size:8.9px;color:#97989d;transform-origin:100% 50%;transform:rotate(-45deg)">Minor - Di</div>
<div class="t" style="left:1369.43px;top:1045.50px;font-size:8.9px;color:#97989d;transform-origin:100% 50%;transform:rotate(-45deg)">Minor - Di</div>
<div class="t" style="left:1402.07px;top:1045.50px;font-size:8.9px;color:#97989d;transform-origin:100% 50%;transform:rotate(-45deg)">Minor - Di</div>
<div class="t" style="left:1433.73px;top:1045.50px;font-size:8.9px;color:#97989d;transform-origin:100% 50%;transform:rotate(-45deg)">Minor - Dr</div>
<div class="t" style="left:1467.84px;top:1045.50px;font-size:8.9px;color:#97989d;transform-origin:100% 50%;transform:rotate(-45deg)">Minor - El</div>
<div class="t" style="left:1498.01px;top:1045.50px;font-size:8.9px;color:#97989d;transform-origin:100% 50%;transform:rotate(-45deg)">Minor - Ex</div>
<div class="t" style="left:1533.61px;top:1045.50px;font-size:8.9px;color:#97989d;transform-origin:100% 50%;transform:rotate(-45deg)">Minor - In</div>
<div class="t" style="left:1566.25px;top:1045.50px;font-size:8.9px;color:#97989d;transform-origin:100% 50%;transform:rotate(-45deg)">Minor - In</div>
<div class="t" style="left:1594.44px;top:1045.50px;font-size:8.9px;color:#97989d;transform-origin:100% 50%;transform:rotate(-45deg)">Minor - Ou</div>
<div class="t" style="left:1628.07px;top:1045.50px;font-size:8.9px;color:#97989d;transform-origin:100% 50%;transform:rotate(-45deg)">Minor - Ph</div>
<div class="t" style="left:1660.71px;top:1045.50px;font-size:8.9px;color:#97989d;transform-origin:100% 50%;transform:rotate(-45deg)">Minor - Ph</div>
<div class="t" style="left:1695.34px;top:1045.50px;font-size:8.9px;color:#97989d;transform-origin:100% 50%;transform:rotate(-45deg)">Minor - Pr</div>
<div class="t" style="left:1728.97px;top:1045.50px;font-size:8.9px;color:#97989d;transform-origin:100% 50%;transform:rotate(-45deg)">Minor - Tr</div>
<div class="t" style="left:1759.12px;top:1045.50px;font-size:8.9px;color:#97989d;transform-origin:100% 50%;transform:rotate(-45deg)">Minor - Ve</div>
<div class="t" style="left:1325.93px;top:897.47px;font-size:10.3px;font-weight:bold;color:#15161a;line-height:10.3px;transform:rotate(-90deg)">1<span style="display:inline-block;width:4.7px"></span>576</div>
<div class="t" style="left:1396.41px;top:1021.56px;font-size:10.3px;font-weight:bold;color:#15161a;line-height:10.3px;transform:rotate(-90deg)">142</div>
<div class="t" style="left:1494.33px;top:962.72px;font-size:10.3px;font-weight:bold;color:#15161a;line-height:10.3px;transform:rotate(-90deg)">822</div>
<div class="t" style="left:1526.97px;top:1020.00px;font-size:10.3px;font-weight:bold;color:#15161a;line-height:10.3px;transform:rotate(-90deg)">160</div>
<div class="t" style="left:1559.61px;top:972.76px;font-size:10.3px;font-weight:bold;color:#15161a;line-height:10.3px;transform:rotate(-90deg)">706</div>
<div class="t" style="left:1592.25px;top:971.20px;font-size:10.3px;font-weight:bold;color:#15161a;line-height:10.3px;transform:rotate(-90deg)">724</div>
<div class="t" style="left:1624.89px;top:988.16px;font-size:10.3px;font-weight:bold;color:#15161a;line-height:10.3px;transform:rotate(-90deg)">528</div>
<div class="t" style="left:1652.33px;top:904.83px;font-size:10.3px;font-weight:bold;color:#15161a;line-height:10.3px;transform:rotate(-90deg)">1<span style="display:inline-block;width:4.7px"></span>491</div>
<div class="t" style="left:1690.17px;top:1000.45px;font-size:10.3px;font-weight:bold;color:#15161a;line-height:10.3px;transform:rotate(-90deg)">386</div>
<div class="t" style="left:1725.67px;top:1026.24px;font-size:10.3px;font-weight:bold;color:#15161a;line-height:10.3px;transform:rotate(-90deg)">88</div>
<div class="t" style="left:1758.31px;top:1026.58px;font-size:10.3px;font-weight:bold;color:#15161a;line-height:10.3px;transform:rotate(-90deg)">84</div>
<div class="t" style="left:1788.09px;top:1018.27px;font-size:10.3px;font-weight:bold;color:#15161a;line-height:10.3px;transform:rotate(-90deg)">180</div>
<div style="position:absolute;left:1287.6000000000001px;top:1089.7px;width:10.6px;height:10.6px;border-radius:50%;background:#3a6697"></div>
<div class="t" style="left:1305.01px;top:1089.99px;font-size:11.34px;color:#2b2c31;font-weight:bold;letter-spacing:0.810px;">2020-2021</div>
<div style="position:absolute;left:1883px;top:807px;width:589.5px;height:313px;background:#fff;border:1.5px solid #dcdde0;border-radius:3px;box-sizing:border-box;box-shadow:0 1px 1px rgba(0,0,0,0.04)"></div>
<div style="position:absolute;left:1884.5px;top:854.5px;width:586.5px;height:1.5px;background:#e1e2e5"></div>
<div class="t" style="left:1898.35px;top:821.40px;font-size:16.28px;color:#85868b;transform:scaleX(0.9369);transform-origin:0 0;">By Response</div>
<svg style="position:absolute;left:0;top:0" width="2560" height="1853"><g fill="#72747c"><path d="M2351.0 822 H2360.0 V823.8 H2358.7 L2359.7 828.8 L2361.5 830.6 V832 H2349.5 V830.6 L2351.3 828.8 L2352.3 823.8 H2351.0 Z"/><rect x="2354.7" y="831.5" width="1.6" height="5.3"/><path d="M2395.0 836.5 L2395.0 831.0 L2400.5 836.5 Z M2409.0 822.5 L2403.5 822.5 L2409.0 828.0 Z"/><path d="M2397.0 834.5 L2407.0 824.5" stroke="#72747c" stroke-width="1.7" stroke-dasharray="3.2 1.6"/><circle cx="2448.5" cy="824.2" r="1.6"/><circle cx="2448.5" cy="829.5" r="1.6"/><circle cx="2448.5" cy="835.1" r="1.6"/></g><path d="M2440.9 872.3 L2446.3 877.2 L2451.7 872.3" fill="none" stroke="#72747c" stroke-width="1.6" stroke-linecap="round" stroke-linejoin="round"/></svg>
<div class="t" style="left:2334.63px;top:863.81px;font-size:17.44px;color:#6f7075;letter-spacing:1.413px;-webkit-text-stroke:0.45px #6f7075;">2020-2021</div>
<svg style="position:absolute;left:0;top:0" width="2560" height="1853"><line x1="1928" y1="1039.50" x2="2426.5" y2="1039.50" stroke="#f1f1f1" stroke-width="1"/><line x1="1928" y1="1027.67" x2="2426.5" y2="1027.67" stroke="#f1f1f1" stroke-width="1"/><line x1="1928" y1="1015.85" x2="2426.5" y2="1015.85" stroke="#f1f1f1" stroke-width="1"/><line x1="1928" y1="1004.02" x2="2426.5" y2="1004.02" stroke="#f1f1f1" stroke-width="1"/><line x1="1928" y1="992.20" x2="2426.5" y2="992.20" stroke="#f1f1f1" stroke-width="1"/><line x1="1928" y1="980.37" x2="2426.5" y2="980.37" stroke="#f1f1f1" stroke-width="1"/><line x1="1928" y1="968.55" x2="2426.5" y2="968.55" stroke="#f1f1f1" stroke-width="1"/><line x1="1928" y1="956.72" x2="2426.5" y2="956.72" stroke="#f1f1f1" stroke-width="1"/><line x1="1928" y1="944.90" x2="2426.5" y2="944.90" stroke="#f1f1f1" stroke-width="1"/><line x1="1928" y1="933.07" x2="2426.5" y2="933.07" stroke="#f1f1f1" stroke-width="1"/><line x1="1928" y1="921.25" x2="2426.5" y2="921.25" stroke="#f1f1f1" stroke-width="1"/><line x1="1928" y1="909.42" x2="2426.5" y2="909.42" stroke="#f1f1f1" stroke-width="1"/><line x1="1928" y1="897.60" x2="2426.5" y2="897.60" stroke="#f1f1f1" stroke-width="1"/><line x1="1937.00" y1="884.5" x2="1937.00" y2="1045.5" stroke="#f5f5f5" stroke-width="1"/><line x1="1965.79" y1="884.5" x2="1965.79" y2="1045.5" stroke="#f5f5f5" stroke-width="1"/><line x1="1994.59" y1="884.5" x2="1994.59" y2="1045.5" stroke="#f5f5f5" stroke-width="1"/><line x1="2023.38" y1="884.5" x2="2023.38" y2="1045.5" stroke="#f5f5f5" stroke-width="1"/><line x1="2052.18" y1="884.5" x2="2052.18" y2="1045.5" stroke="#f5f5f5" stroke-width="1"/><line x1="2080.97" y1="884.5" x2="2080.97" y2="1045.5" stroke="#f5f5f5" stroke-width="1"/><line x1="2109.76" y1="884.5" x2="2109.76" y2="1045.5" stroke="#f5f5f5" stroke-width="1"/><line x1="2138.56" y1="884.5" x2="2138.56" y2="1045.5" stroke="#f5f5f5" stroke-width="1"/><line x1="2167.35" y1="884.5" x2="2167.35" y2="1045.5" stroke="#f5f5f5" stroke-width="1"/><line x1="2196.15" y1="884.5" x2="2196.15" y2="1045.5" stroke="#f5f5f5" stroke-width="1"/><line x1="2224.94" y1="884.5" x2="2224.94" y2="1045.5" stroke="#f5f5f5" stroke-width="1"/><line x1="2253.74" y1="884.5" x2="2253.74" y2="1045.5" stroke="#f5f5f5" stroke-width="1"/><line x1="2282.53" y1="884.5" x2="2282.53" y2="1045.5" stroke="#f5f5f5" stroke-width="1"/><line x1="2311.32" y1="884.5" x2="2311.32" y2="1045.5" stroke="#f5f5f5" stroke-width="1"/><line x1="2340.12" y1="884.5" x2="2340.12" y2="1045.5" stroke="#f5f5f5" stroke-width="1"/><line x1="2368.91" y1="884.5" x2="2368.91" y2="1045.5" stroke="#f5f5f5" stroke-width="1"/><line x1="2397.71" y1="884.5" x2="2397.71" y2="1045.5" stroke="#f5f5f5" stroke-width="1"/><line x1="2426.50" y1="884.5" x2="2426.50" y2="1045.5" stroke="#f5f5f5" stroke-width="1"/><rect x="1944.63" y="1003.93" width="13.53" height="35.57" fill="#3a6697"/><rect x="1973.42" y="1034.50" width="13.53" height="5.00" fill="#3a6697"/><rect x="2002.22" y="1037.50" width="13.53" height="2.00" fill="#3a6697"/><rect x="2031.01" y="888.50" width="13.53" height="151.00" fill="#3a6697"/><rect x="2059.81" y="985.10" width="13.53" height="54.40" fill="#3a6697"/><rect x="2088.60" y="983.92" width="13.53" height="55.58" fill="#3a6697"/><rect x="2117.40" y="1012.85" width="13.53" height="26.65" fill="#3a6697"/><rect x="2146.19" y="945.26" width="13.53" height="94.24" fill="#3a6697"/><rect x="2174.98" y="1035.41" width="13.53" height="4.09" fill="#3a6697"/><rect x="2203.78" y="912.79" width="13.53" height="126.71" fill="#3a6697"/><rect x="2232.57" y="1038.59" width="13.53" height="0.91" fill="#3a6697"/><rect x="2290.16" y="975.28" width="13.53" height="64.22" fill="#3a6697"/><rect x="2347.75" y="1020.76" width="13.53" height="18.74" fill="#3a6697"/><rect x="2405.34" y="1025.58" width="13.53" height="13.92" fill="#3a6697"/></svg>
<div class="t" style="left:1918.84px;top:1035.57px;font-size:9.00px;color:#6f7075;">0</div>
<div class="t" style="left:1908.83px;top:1023.74px;font-size:9.00px;color:#6f7075;">130</div>
<div class="t" style="left:1908.83px;top:1011.92px;font-size:9.00px;color:#6f7075;">260</div>
<div class="t" style="left:1908.83px;top:1000.09px;font-size:9.00px;color:#6f7075;">390</div>
<div class="t" style="left:1908.83px;top:988.27px;font-size:9.00px;color:#6f7075;">520</div>
<div class="t" style="left:1908.83px;top:976.44px;font-size:9.00px;color:#6f7075;">650</div>
<div class="t" style="left:1908.83px;top:964.62px;font-size:9.00px;color:#6f7075;">780</div>
<div class="t" style="left:1908.83px;top:952.79px;font-size:9.00px;color:#6f7075;">910</div>
<div class="t" style="left:1903.83px;top:940.97px;font-size:9.00px;color:#6f7075;">1040</div>
<div class="t" style="left:1904.49px;top:929.14px;font-size:9.00px;color:#6f7075;">1170</div>
<div class="t" style="left:1903.83px;top:917.31px;font-size:9.00px;color:#6f7075;">1300</div>
<div class="t" style="left:1903.83px;top:905.49px;font-size:9.00px;color:#6f7075;">1430</div>
<div class="t" style="left:1903.83px;top:893.66px;font-size:9.00px;color:#6f7075;">1560</div>
<div class="t" style="left:1910.37px;top:1045.50px;font-size:8.9px;color:#97989d;transform-origin:100% 50%;transform:rotate(-45deg)">Behavior C</div>
<div class="t" style="left:1941.14px;top:1045.50px;font-size:8.9px;color:#97989d;transform-origin:100% 50%;transform:rotate(-45deg)">Behavior c</div>
<div class="t" style="left:1961.04px;top:1045.50px;font-size:8.9px;color:#97989d;transform-origin:100% 50%;transform:rotate(-45deg)">Bus Remova</div>
<div class="t" style="left:1996.25px;top:1045.50px;font-size:8.9px;color:#97989d;transform-origin:100% 50%;transform:rotate(-45deg)">Counseling</div>
<div class="t" style="left:2025.04px;top:1045.50px;font-size:8.9px;color:#97989d;transform-origin:100% 50%;transform:rotate(-45deg)">Counseling</div>
<div class="t" style="left:2060.27px;top:1045.50px;font-size:8.9px;color:#97989d;transform-origin:100% 50%;transform:rotate(-45deg)">Detention</div>
<div class="t" style="left:2089.06px;top:1045.50px;font-size:8.9px;color:#97989d;transform-origin:100% 50%;transform:rotate(-45deg)">Detention</div>
<div class="t" style="left:2117.86px;top:1045.50px;font-size:8.9px;color:#97989d;transform-origin:100% 50%;transform:rotate(-45deg)">Detention</div>
<div class="t" style="left:2139.73px;top:1045.50px;font-size:8.9px;color:#97989d;transform-origin:100% 50%;transform:rotate(-45deg)">Parent Con</div>
<div class="t" style="left:2168.52px;top:1045.50px;font-size:8.9px;color:#97989d;transform-origin:100% 50%;transform:rotate(-45deg)">Parent Con</div>
<div class="t" style="left:2206.22px;top:1045.50px;font-size:8.9px;color:#97989d;transform-origin:100% 50%;transform:rotate(-45deg)">Parent to</div>
<div class="t" style="left:2237.00px;top:1045.50px;font-size:8.9px;color:#97989d;transform-origin:100% 50%;transform:rotate(-45deg)">Principal</div>
<div class="t" style="left:2263.32px;top:1045.50px;font-size:8.9px;color:#97989d;transform-origin:100% 50%;transform:rotate(-45deg)">Privilege/</div>
<div class="t" style="left:2284.21px;top:1045.50px;font-size:8.9px;color:#97989d;transform-origin:100% 50%;transform:rotate(-45deg)">Progress R</div>
<div class="t" style="left:2317.45px;top:1045.50px;font-size:8.9px;color:#97989d;transform-origin:100% 50%;transform:rotate(-45deg)">Restorativ</div>
<div class="t" style="left:2342.28px;top:1045.50px;font-size:8.9px;color:#97989d;transform-origin:100% 50%;transform:rotate(-45deg)">Saturday S</div>
<div class="t" style="left:2370.07px;top:1045.50px;font-size:8.9px;color:#97989d;transform-origin:100% 50%;transform:rotate(-45deg)">Seat chang</div>
<div class="t" style="left:1942.80px;top:998.28px;font-size:10.3px;font-weight:bold;color:#15161a;line-height:10.3px;transform:rotate(-90deg)">391</div>
<div class="t" style="left:2057.98px;top:979.45px;font-size:10.3px;font-weight:bold;color:#15161a;line-height:10.3px;transform:rotate(-90deg)">598</div>
<div class="t" style="left:2087.06px;top:978.27px;font-size:10.3px;font-weight:bold;color:#15161a;line-height:10.3px;transform:rotate(-90deg)">611</div>
<div class="t" style="left:2115.57px;top:1007.20px;font-size:10.3px;font-weight:bold;color:#15161a;line-height:10.3px;transform:rotate(-90deg)">293</div>
<div class="t" style="left:2139.17px;top:939.61px;font-size:10.3px;font-weight:bold;color:#15161a;line-height:10.3px;transform:rotate(-90deg)">1<span style="display:inline-block;width:4.7px"></span>036</div>
<div class="t" style="left:2196.76px;top:907.14px;font-size:10.3px;font-weight:bold;color:#15161a;line-height:10.3px;transform:rotate(-90deg)">1<span style="display:inline-block;width:4.7px"></span>393</div>
<div class="t" style="left:2288.33px;top:969.63px;font-size:10.3px;font-weight:bold;color:#15161a;line-height:10.3px;transform:rotate(-90deg)">706</div>
<div class="t" style="left:2345.92px;top:1015.11px;font-size:10.3px;font-weight:bold;color:#15161a;line-height:10.3px;transform:rotate(-90deg)">206</div>
<div class="t" style="left:2403.51px;top:1019.93px;font-size:10.3px;font-weight:bold;color:#15161a;line-height:10.3px;transform:rotate(-90deg)">153</div>
<div style="position:absolute;left:1901.2px;top:1089.7px;width:10.6px;height:10.6px;border-radius:50%;background:#3a6697"></div>
<div class="t" style="left:1918.61px;top:1089.99px;font-size:11.34px;color:#2b2c31;font-weight:bold;letter-spacing:0.810px;">2020-2021</div>
<div style="position:absolute;left:663.4px;top:1146.6px;width:576.1px;height:313.4000000000001px;background:#fff;border:1.5px solid #dcdde0;border-radius:3px;box-sizing:border-box;box-shadow:0 1px 1px rgba(0,0,0,0.04)"></div>
<div style="position:absolute;left:664.9px;top:1194.1px;width:573.1px;height:1.5px;background:#e1e2e5"></div>
<div class="t" style="left:678.69px;top:1161.00px;font-size:16.28px;color:#85868b;transform:scaleX(0.9791);transform-origin:0 0;">By Month</div>
<svg style="position:absolute;left:0;top:0" width="2560" height="1853"><g fill="#72747c"><path d="M1118.0 1161.6 H1127.0 V1163.3999999999999 H1125.7 L1126.7 1168.3999999999999 L1128.5 1170.1999999999998 V1171.6 H1116.5 V1170.1999999999998 L1118.3 1168.3999999999999 L1119.3 1163.3999999999999 H1118.0 Z"/><rect x="1121.7" y="1171.1" width="1.6" height="5.3"/><path d="M1162.0 1176.1 L1162.0 1170.6 L1167.5 1176.1 Z M1176.0 1162.1 L1170.5 1162.1 L1176.0 1167.6 Z"/><path d="M1164.0 1174.1 L1174.0 1164.1" stroke="#72747c" stroke-width="1.7" stroke-dasharray="3.2 1.6"/><circle cx="1215.5" cy="1163.8" r="1.6"/><circle cx="1215.5" cy="1169.1" r="1.6"/><circle cx="1215.5" cy="1174.6999999999998" r="1.6"/></g><path d="M1207.9 1211.8999999999999 L1213.3 1216.8 L1218.7 1211.8999999999999" fill="none" stroke="#72747c" stroke-width="1.6" stroke-linecap="round" stroke-linejoin="round"/></svg>
<div class="t" style="left:1101.63px;top:1203.41px;font-size:17.44px;color:#6f7075;letter-spacing:1.413px;-webkit-text-stroke:0.45px #6f7075;">2020-2021</div>
<svg style="position:absolute;left:0;top:0" width="2560" height="1853"><line x1="708.4" y1="1379.10" x2="1193.5" y2="1379.10" stroke="#f1f1f1" stroke-width="1"/><line x1="708.4" y1="1367.15" x2="1193.5" y2="1367.15" stroke="#f1f1f1" stroke-width="1"/><line x1="708.4" y1="1355.21" x2="1193.5" y2="1355.21" stroke="#f1f1f1" stroke-width="1"/><line x1="708.4" y1="1343.26" x2="1193.5" y2="1343.26" stroke="#f1f1f1" stroke-width="1"/><line x1="708.4" y1="1331.32" x2="1193.5" y2="1331.32" stroke="#f1f1f1" stroke-width="1"/><line x1="708.4" y1="1319.37" x2="1193.5" y2="1319.37" stroke="#f1f1f1" stroke-width="1"/><line x1="708.4" y1="1307.42" x2="1193.5" y2="1307.42" stroke="#f1f1f1" stroke-width="1"/><line x1="708.4" y1="1295.48" x2="1193.5" y2="1295.48" stroke="#f1f1f1" stroke-width="1"/><line x1="708.4" y1="1283.53" x2="1193.5" y2="1283.53" stroke="#f1f1f1" stroke-width="1"/><line x1="708.4" y1="1271.58" x2="1193.5" y2="1271.58" stroke="#f1f1f1" stroke-width="1"/><line x1="708.4" y1="1259.64" x2="1193.5" y2="1259.64" stroke="#f1f1f1" stroke-width="1"/><line x1="708.4" y1="1247.69" x2="1193.5" y2="1247.69" stroke="#f1f1f1" stroke-width="1"/><line x1="708.4" y1="1235.75" x2="1193.5" y2="1235.75" stroke="#f1f1f1" stroke-width="1"/><line x1="717.40" y1="1224.1" x2="717.40" y2="1385.1" stroke="#f5f5f5" stroke-width="1"/><line x1="776.91" y1="1224.1" x2="776.91" y2="1385.1" stroke="#f5f5f5" stroke-width="1"/><line x1="836.42" y1="1224.1" x2="836.42" y2="1385.1" stroke="#f5f5f5" stroke-width="1"/><line x1="895.94" y1="1224.1" x2="895.94" y2="1385.1" stroke="#f5f5f5" stroke-width="1"/><line x1="955.45" y1="1224.1" x2="955.45" y2="1385.1" stroke="#f5f5f5" stroke-width="1"/><line x1="1014.96" y1="1224.1" x2="1014.96" y2="1385.1" stroke="#f5f5f5" stroke-width="1"/><line x1="1074.47" y1="1224.1" x2="1074.47" y2="1385.1" stroke="#f5f5f5" stroke-width="1"/><line x1="1133.99" y1="1224.1" x2="1133.99" y2="1385.1" stroke="#f5f5f5" stroke-width="1"/><line x1="1193.50" y1="1224.1" x2="1193.50" y2="1385.1" stroke="#f5f5f5" stroke-width="1"/><rect x="733.17" y="1243.03" width="27.97" height="136.07" fill="#3a6697"/><rect x="792.68" y="1329.40" width="27.97" height="49.70" fill="#3a6697"/><rect x="852.20" y="1228.10" width="27.97" height="151.00" fill="#3a6697"/><rect x="911.71" y="1247.33" width="27.97" height="131.77" fill="#3a6697"/><rect x="971.22" y="1232.64" width="27.97" height="146.46" fill="#3a6697"/><rect x="1030.73" y="1235.27" width="27.97" height="143.83" fill="#3a6697"/><rect x="1090.25" y="1237.90" width="27.97" height="141.20" fill="#3a6697"/><rect x="1149.76" y="1237.90" width="27.97" height="141.20" fill="#3a6697"/></svg>
<div class="t" style="left:699.24px;top:1375.17px;font-size:9.00px;color:#6f7075;">0</div>
<div class="t" style="left:689.23px;top:1363.22px;font-size:9.00px;color:#6f7075;">100</div>
<div class="t" style="left:689.23px;top:1351.28px;font-size:9.00px;color:#6f7075;">200</div>
<div class="t" style="left:689.23px;top:1339.33px;font-size:9.00px;color:#6f7075;">300</div>
<div class="t" style="left:689.23px;top:1327.38px;font-size:9.00px;color:#6f7075;">400</div>
<div class="t" style="left:689.23px;top:1315.44px;font-size:9.00px;color:#6f7075;">500</div>
<div class="t" style="left:689.23px;top:1303.49px;font-size:9.00px;color:#6f7075;">600</div>
<div class="t" style="left:689.23px;top:1291.54px;font-size:9.00px;color:#6f7075;">700</div>
<div class="t" style="left:689.23px;top:1279.60px;font-size:9.00px;color:#6f7075;">800</div>
<div class="t" style="left:689.23px;top:1267.65px;font-size:9.00px;color:#6f7075;">900</div>
<div class="t" style="left:684.23px;top:1255.71px;font-size:9.00px;color:#6f7075;">1000</div>
<div class="t" style="left:684.89px;top:1243.76px;font-size:9.00px;color:#6f7075;">1100</div>
<div class="t" style="left:684.23px;top:1231.81px;font-size:9.00px;color:#6f7075;">1200</div>
<div class="t" style="left:738.92px;top:1387.90px;font-size:9.20px;color:#95969b;">July</div>
<div class="t" style="left:785.15px;top:1387.90px;font-size:9.20px;color:#95969b;">December</div>
<div class="t" style="left:849.75px;top:1387.90px;font-size:9.20px;color:#95969b;">January</div>
<div class="t" style="left:906.92px;top:1387.90px;font-size:9.20px;color:#95969b;">February</div>
<div class="t" style="left:972.34px;top:1387.90px;font-size:9.20px;color:#95969b;">March</div>
<div class="t" style="left:1035.81px;top:1387.90px;font-size:9.20px;color:#95969b;">April</div>
<div class="t" style="left:1095.17px;top:1387.90px;font-size:9.20px;color:#95969b;">May</div>
<div class="t" style="left:1153.90px;top:1387.90px;font-size:9.20px;color:#95969b;">June</div>
<div class="t" style="left:733.37px;top:1237.38px;font-size:10.3px;font-weight:bold;color:#15161a;line-height:10.3px;transform:rotate(-90deg)">1<span style="display:inline-block;width:4.7px"></span>139</div>
<div class="t" style="left:798.08px;top:1323.75px;font-size:10.3px;font-weight:bold;color:#15161a;line-height:10.3px;transform:rotate(-90deg)">416</div>
<div class="t" style="left:911.91px;top:1241.68px;font-size:10.3px;font-weight:bold;color:#15161a;line-height:10.3px;transform:rotate(-90deg)">1<span style="display:inline-block;width:4.7px"></span>103</div>
<div style="position:absolute;left:681.6px;top:1429.3px;width:10.6px;height:10.6px;border-radius:50%;background:#3a6697"></div>
<div class="t" style="left:699.01px;top:1429.59px;font-size:11.34px;color:#2b2c31;font-weight:bold;letter-spacing:0.810px;">2020-2021</div>
<div style="position:absolute;left:1277px;top:1146.6px;width:575px;height:313.4000000000001px;background:#fff;border:1.5px solid #dcdde0;border-radius:3px;box-sizing:border-box;box-shadow:0 1px 1px rgba(0,0,0,0.04)"></div>
<div style="position:absolute;left:1278.5px;top:1194.1px;width:572.0px;height:1.5px;background:#e1e2e5"></div>
<div class="t" style="left:1292.33px;top:1161.00px;font-size:16.28px;color:#85868b;transform:scaleX(0.9508);transform-origin:0 0;">By Weekday</div>
<svg style="position:absolute;left:0;top:0" width="2560" height="1853"><g fill="#72747c"><path d="M1730.5 1161.6 H1739.5 V1163.3999999999999 H1738.2 L1739.2 1168.3999999999999 L1741 1170.1999999999998 V1171.6 H1729 V1170.1999999999998 L1730.8 1168.3999999999999 L1731.8 1163.3999999999999 H1730.5 Z"/><rect x="1734.2" y="1171.1" width="1.6" height="5.3"/><path d="M1774.5 1176.1 L1774.5 1170.6 L1780.0 1176.1 Z M1788.5 1162.1 L1783.0 1162.1 L1788.5 1167.6 Z"/><path d="M1776.5 1174.1 L1786.5 1164.1" stroke="#72747c" stroke-width="1.7" stroke-dasharray="3.2 1.6"/><circle cx="1828" cy="1163.8" r="1.6"/><circle cx="1828" cy="1169.1" r="1.6"/><circle cx="1828" cy="1174.6999999999998" r="1.6"/></g><path d="M1820.4 1211.8999999999999 L1825.8 1216.8 L1831.2 1211.8999999999999" fill="none" stroke="#72747c" stroke-width="1.6" stroke-linecap="round" stroke-linejoin="round"/></svg>
<div class="t" style="left:1714.13px;top:1203.41px;font-size:17.44px;color:#6f7075;letter-spacing:1.413px;-webkit-text-stroke:0.45px #6f7075;">2020-2021</div>
<svg style="position:absolute;left:0;top:0" width="2560" height="1853"><line x1="1322" y1="1379.10" x2="1806" y2="1379.10" stroke="#f1f1f1" stroke-width="1"/><line x1="1322" y1="1367.53" x2="1806" y2="1367.53" stroke="#f1f1f1" stroke-width="1"/><line x1="1322" y1="1355.96" x2="1806" y2="1355.96" stroke="#f1f1f1" stroke-width="1"/><line x1="1322" y1="1344.39" x2="1806" y2="1344.39" stroke="#f1f1f1" stroke-width="1"/><line x1="1322" y1="1332.82" x2="1806" y2="1332.82" stroke="#f1f1f1" stroke-width="1"/><line x1="1322" y1="1321.25" x2="1806" y2="1321.25" stroke="#f1f1f1" stroke-width="1"/><line x1="1322" y1="1309.67" x2="1806" y2="1309.67" stroke="#f1f1f1" stroke-width="1"/><line x1="1322" y1="1298.10" x2="1806" y2="1298.10" stroke="#f1f1f1" stroke-width="1"/><line x1="1322" y1="1286.53" x2="1806" y2="1286.53" stroke="#f1f1f1" stroke-width="1"/><line x1="1322" y1="1274.96" x2="1806" y2="1274.96" stroke="#f1f1f1" stroke-width="1"/><line x1="1322" y1="1263.39" x2="1806" y2="1263.39" stroke="#f1f1f1" stroke-width="1"/><line x1="1322" y1="1251.82" x2="1806" y2="1251.82" stroke="#f1f1f1" stroke-width="1"/><line x1="1322" y1="1240.25" x2="1806" y2="1240.25" stroke="#f1f1f1" stroke-width="1"/><line x1="1322" y1="1228.68" x2="1806" y2="1228.68" stroke="#f1f1f1" stroke-width="1"/><line x1="1331.00" y1="1224.1" x2="1331.00" y2="1385.1" stroke="#f5f5f5" stroke-width="1"/><line x1="1398.86" y1="1224.1" x2="1398.86" y2="1385.1" stroke="#f5f5f5" stroke-width="1"/><line x1="1466.71" y1="1224.1" x2="1466.71" y2="1385.1" stroke="#f5f5f5" stroke-width="1"/><line x1="1534.57" y1="1224.1" x2="1534.57" y2="1385.1" stroke="#f5f5f5" stroke-width="1"/><line x1="1602.43" y1="1224.1" x2="1602.43" y2="1385.1" stroke="#f5f5f5" stroke-width="1"/><line x1="1670.29" y1="1224.1" x2="1670.29" y2="1385.1" stroke="#f5f5f5" stroke-width="1"/><line x1="1738.14" y1="1224.1" x2="1738.14" y2="1385.1" stroke="#f5f5f5" stroke-width="1"/><line x1="1806.00" y1="1224.1" x2="1806.00" y2="1385.1" stroke="#f5f5f5" stroke-width="1"/><rect x="1348.98" y="1232.50" width="31.89" height="146.60" fill="#3a6697"/><rect x="1416.84" y="1234.35" width="31.89" height="144.75" fill="#3a6697"/><rect x="1484.70" y="1231.69" width="31.89" height="147.41" fill="#3a6697"/><rect x="1552.55" y="1238.51" width="31.89" height="140.59" fill="#3a6697"/><rect x="1620.41" y="1237.70" width="31.89" height="141.40" fill="#3a6697"/><rect x="1688.27" y="1228.10" width="31.89" height="151.00" fill="#3a6697"/><rect x="1756.12" y="1244.65" width="31.89" height="134.45" fill="#3a6697"/></svg>
<div class="t" style="left:1312.84px;top:1375.17px;font-size:9.00px;color:#6f7075;">0</div>
<div class="t" style="left:1302.83px;top:1363.60px;font-size:9.00px;color:#6f7075;">100</div>
<div class="t" style="left:1302.83px;top:1352.03px;font-size:9.00px;color:#6f7075;">200</div>
<div class="t" style="left:1302.83px;top:1340.46px;font-size:9.00px;color:#6f7075;">300</div>
<div class="t" style="left:1302.83px;top:1328.88px;font-size:9.00px;color:#6f7075;">400</div>
<div class="t" style="left:1302.83px;top:1317.31px;font-size:9.00px;color:#6f7075;">500</div>
<div class="t" style="left:1302.83px;top:1305.74px;font-size:9.00px;color:#6f7075;">600</div>
<div class="t" style="left:1302.83px;top:1294.17px;font-size:9.00px;color:#6f7075;">700</div>
<div class="t" style="left:1302.83px;top:1282.60px;font-size:9.00px;color:#6f7075;">800</div>
<div class="t" style="left:1302.83px;top:1271.03px;font-size:9.00px;color:#6f7075;">900</div>
<div class="t" style="left:1297.83px;top:1259.46px;font-size:9.00px;color:#6f7075;">1000</div>
<div class="t" style="left:1298.49px;top:1247.89px;font-size:9.00px;color:#6f7075;">1100</div>
<div class="t" style="left:1297.83px;top:1236.32px;font-size:9.00px;color:#6f7075;">1200</div>
<div class="t" style="left:1297.83px;top:1224.75px;font-size:9.00px;color:#6f7075;">1300</div>
<div class="t" style="left:1348.19px;top:1387.90px;font-size:9.20px;color:#95969b;">Monday</div>
<div class="t" style="left:1415.22px;top:1387.90px;font-size:9.20px;color:#95969b;">Tuesday</div>
<div class="t" style="left:1476.42px;top:1387.90px;font-size:9.20px;color:#95969b;">Wednesday</div>
<div class="t" style="left:1549.24px;top:1387.90px;font-size:9.20px;color:#95969b;">Thursday</div>
<div class="t" style="left:1623.21px;top:1387.90px;font-size:9.20px;color:#95969b;">Friday</div>
<div class="t" style="left:1685.61px;top:1387.90px;font-size:9.20px;color:#95969b;">Saturday</div>
<div class="t" style="left:1756.27px;top:1387.90px;font-size:9.20px;color:#95969b;">Sunday</div>
<div class="t" style="left:1758.28px;top:1239.00px;font-size:10.3px;font-weight:bold;color:#15161a;line-height:10.3px;transform:rotate(-90deg)">1<span style="display:inline-block;width:4.7px"></span>162</div>
<div style="position:absolute;left:1295.2px;top:1429.3px;width:10.6px;height:10.6px;border-radius:50%;background:#3a6697"></div>
<div class="t" style="left:1312.61px;top:1429.59px;font-size:11.34px;color:#2b2c31;font-weight:bold;letter-spacing:0.810px;">2020-2021</div>
<div style="position:absolute;left:1890px;top:1146.6px;width:575px;height:313.4000000000001px;background:#fff;border:1.5px solid #dcdde0;border-radius:3px;box-sizing:border-box;box-shadow:0 1px 1px rgba(0,0,0,0.04)"></div>
<div style="position:absolute;left:1891.5px;top:1194.1px;width:572.0px;height:1.5px;background:#e1e2e5"></div>
<div class="t" style="left:1905.33px;top:1161.00px;font-size:16.28px;color:#85868b;transform:scaleX(0.9545);transform-origin:0 0;">By Hour</div>
<svg style="position:absolute;left:0;top:0" width="2560" height="1853"><g fill="#72747c"><path d="M2343.5 1161.6 H2352.5 V1163.3999999999999 H2351.2 L2352.2 1168.3999999999999 L2354 1170.1999999999998 V1171.6 H2342 V1170.1999999999998 L2343.8 1168.3999999999999 L2344.8 1163.3999999999999 H2343.5 Z"/><rect x="2347.2" y="1171.1" width="1.6" height="5.3"/><path d="M2387.5 1176.1 L2387.5 1170.6 L2393.0 1176.1 Z M2401.5 1162.1 L2396.0 1162.1 L2401.5 1167.6 Z"/><path d="M2389.5 1174.1 L2399.5 1164.1" stroke="#72747c" stroke-width="1.7" stroke-dasharray="3.2 1.6"/><circle cx="2441" cy="1163.8" r="1.6"/><circle cx="2441" cy="1169.1" r="1.6"/><circle cx="2441" cy="1174.6999999999998" r="1.6"/></g><path d="M2433.4 1211.8999999999999 L2438.8 1216.8 L2444.2 1211.8999999999999" fill="none" stroke="#72747c" stroke-width="1.6" stroke-linecap="round" stroke-linejoin="round"/></svg>
<div class="t" style="left:2327.13px;top:1203.41px;font-size:17.44px;color:#6f7075;letter-spacing:1.413px;-webkit-text-stroke:0.45px #6f7075;">2020-2021</div>
<svg style="position:absolute;left:0;top:0" width="2560" height="1853"><line x1="1935" y1="1379.10" x2="2419" y2="1379.10" stroke="#f1f1f1" stroke-width="1"/><line x1="1935" y1="1367.53" x2="2419" y2="1367.53" stroke="#f1f1f1" stroke-width="1"/><line x1="1935" y1="1355.96" x2="2419" y2="1355.96" stroke="#f1f1f1" stroke-width="1"/><line x1="1935" y1="1344.39" x2="2419" y2="1344.39" stroke="#f1f1f1" stroke-width="1"/><line x1="1935" y1="1332.82" x2="2419" y2="1332.82" stroke="#f1f1f1" stroke-width="1"/><line x1="1935" y1="1321.25" x2="2419" y2="1321.25" stroke="#f1f1f1" stroke-width="1"/><line x1="1935" y1="1309.67" x2="2419" y2="1309.67" stroke="#f1f1f1" stroke-width="1"/><line x1="1935" y1="1298.10" x2="2419" y2="1298.10" stroke="#f1f1f1" stroke-width="1"/><line x1="1935" y1="1286.53" x2="2419" y2="1286.53" stroke="#f1f1f1" stroke-width="1"/><line x1="1935" y1="1274.96" x2="2419" y2="1274.96" stroke="#f1f1f1" stroke-width="1"/><line x1="1935" y1="1263.39" x2="2419" y2="1263.39" stroke="#f1f1f1" stroke-width="1"/><line x1="1935" y1="1251.82" x2="2419" y2="1251.82" stroke="#f1f1f1" stroke-width="1"/><line x1="1935" y1="1240.25" x2="2419" y2="1240.25" stroke="#f1f1f1" stroke-width="1"/><line x1="1935" y1="1228.68" x2="2419" y2="1228.68" stroke="#f1f1f1" stroke-width="1"/><line x1="1944.00" y1="1224.1" x2="1944.00" y2="1385.1" stroke="#f5f5f5" stroke-width="1"/><line x1="2011.86" y1="1224.1" x2="2011.86" y2="1385.1" stroke="#f5f5f5" stroke-width="1"/><line x1="2079.71" y1="1224.1" x2="2079.71" y2="1385.1" stroke="#f5f5f5" stroke-width="1"/><line x1="2147.57" y1="1224.1" x2="2147.57" y2="1385.1" stroke="#f5f5f5" stroke-width="1"/><line x1="2215.43" y1="1224.1" x2="2215.43" y2="1385.1" stroke="#f5f5f5" stroke-width="1"/><line x1="2283.29" y1="1224.1" x2="2283.29" y2="1385.1" stroke="#f5f5f5" stroke-width="1"/><line x1="2351.14" y1="1224.1" x2="2351.14" y2="1385.1" stroke="#f5f5f5" stroke-width="1"/><line x1="2419.00" y1="1224.1" x2="2419.00" y2="1385.1" stroke="#f5f5f5" stroke-width="1"/><rect x="1961.98" y="1232.50" width="31.89" height="146.60" fill="#3a6697"/><rect x="2029.84" y="1236.89" width="31.89" height="142.21" fill="#3a6697"/><rect x="2097.70" y="1239.79" width="31.89" height="139.31" fill="#3a6697"/><rect x="2165.55" y="1239.79" width="31.89" height="139.31" fill="#3a6697"/><rect x="2233.41" y="1236.08" width="31.89" height="143.02" fill="#3a6697"/><rect x="2301.27" y="1236.08" width="31.89" height="143.02" fill="#3a6697"/><rect x="2369.12" y="1228.10" width="31.89" height="151.00" fill="#3a6697"/></svg>
<div class="t" style="left:1925.84px;top:1375.17px;font-size:9.00px;color:#6f7075;">0</div>
<div class="t" style="left:1915.83px;top:1363.60px;font-size:9.00px;color:#6f7075;">100</div>
<div class="t" style="left:1915.83px;top:1352.03px;font-size:9.00px;color:#6f7075;">200</div>
<div class="t" style="left:1915.83px;top:1340.46px;font-size:9.00px;color:#6f7075;">300</div>
<div class="t" style="left:1915.83px;top:1328.88px;font-size:9.00px;color:#6f7075;">400</div>
<div class="t" style="left:1915.83px;top:1317.31px;font-size:9.00px;color:#6f7075;">500</div>
<div class="t" style="left:1915.83px;top:1305.74px;font-size:9.00px;color:#6f7075;">600</div>
<div class="t" style="left:1915.83px;top:1294.17px;font-size:9.00px;color:#6f7075;">700</div>
<div class="t" style="left:1915.83px;top:1282.60px;font-size:9.00px;color:#6f7075;">800</div>
<div class="t" style="left:1915.83px;top:1271.03px;font-size:9.00px;color:#6f7075;">900</div>
<div class="t" style="left:1910.83px;top:1259.46px;font-size:9.00px;color:#6f7075;">1000</div>
<div class="t" style="left:1911.49px;top:1247.89px;font-size:9.00px;color:#6f7075;">1100</div>
<div class="t" style="left:1910.83px;top:1236.32px;font-size:9.00px;color:#6f7075;">1200</div>
<div class="t" style="left:1910.83px;top:1224.75px;font-size:9.00px;color:#6f7075;">1300</div>
<div class="t" style="left:1968.65px;top:1387.90px;font-size:9.20px;color:#95969b;">8AM</div>
<div class="t" style="left:2036.49px;top:1387.90px;font-size:9.20px;color:#95969b;">9AM</div>
<div class="t" style="left:2101.66px;top:1387.90px;font-size:9.20px;color:#95969b;">10AM</div>
<div class="t" style="left:2169.85px;top:1387.90px;font-size:9.20px;color:#95969b;">11AM</div>
<div class="t" style="left:2237.37px;top:1387.90px;font-size:9.20px;color:#95969b;">12PM</div>
<div class="t" style="left:2307.78px;top:1387.90px;font-size:9.20px;color:#95969b;">1PM</div>
<div class="t" style="left:2375.76px;top:1387.90px;font-size:9.20px;color:#95969b;">2PM</div>
<div style="position:absolute;left:1908.2px;top:1429.3px;width:10.6px;height:10.6px;border-radius:50%;background:#3a6697"></div>
<div class="t" style="left:1925.61px;top:1429.59px;font-size:11.34px;color:#2b2c31;font-weight:bold;letter-spacing:0.810px;">2020-2021</div>
<div style="position:absolute;left:663.4px;top:1484.5px;width:576.1px;height:312.9000000000001px;background:#fff;border:1.5px solid #dcdde0;border-radius:3px;box-sizing:border-box;box-shadow:0 1px 1px rgba(0,0,0,0.04)"></div>
<div style="position:absolute;left:664.9px;top:1532.0px;width:573.1px;height:1.5px;background:#e1e2e5"></div>
<div class="t" style="left:678.71px;top:1498.90px;font-size:16.28px;color:#85868b;transform:scaleX(0.9676);transform-origin:0 0;">By Location</div>
<svg style="position:absolute;left:0;top:0" width="2560" height="1853"><g fill="#72747c"><path d="M1118.0 1499.5 H1127.0 V1501.3 H1125.7 L1126.7 1506.3 L1128.5 1508.1 V1509.5 H1116.5 V1508.1 L1118.3 1506.3 L1119.3 1501.3 H1118.0 Z"/><rect x="1121.7" y="1509.0" width="1.6" height="5.3"/><path d="M1162.0 1514.0 L1162.0 1508.5 L1167.5 1514.0 Z M1176.0 1500.0 L1170.5 1500.0 L1176.0 1505.5 Z"/><path d="M1164.0 1512.0 L1174.0 1502.0" stroke="#72747c" stroke-width="1.7" stroke-dasharray="3.2 1.6"/><circle cx="1215.5" cy="1501.7" r="1.6"/><circle cx="1215.5" cy="1507.0" r="1.6"/><circle cx="1215.5" cy="1512.6" r="1.6"/></g><path d="M1207.9 1549.8 L1213.3 1554.7 L1218.7 1549.8" fill="none" stroke="#72747c" stroke-width="1.6" stroke-linecap="round" stroke-linejoin="round"/></svg>
<div class="t" style="left:1101.63px;top:1541.31px;font-size:17.44px;color:#6f7075;letter-spacing:1.413px;-webkit-text-stroke:0.45px #6f7075;">2020-2021</div>
<svg style="position:absolute;left:0;top:0" width="2560" height="1853"><line x1="708.4" y1="1716.40" x2="1193.5" y2="1716.40" stroke="#f1f1f1" stroke-width="1"/><line x1="708.4" y1="1704.57" x2="1193.5" y2="1704.57" stroke="#f1f1f1" stroke-width="1"/><line x1="708.4" y1="1692.74" x2="1193.5" y2="1692.74" stroke="#f1f1f1" stroke-width="1"/><line x1="708.4" y1="1680.90" x2="1193.5" y2="1680.90" stroke="#f1f1f1" stroke-width="1"/><line x1="708.4" y1="1669.07" x2="1193.5" y2="1669.07" stroke="#f1f1f1" stroke-width="1"/><line x1="708.4" y1="1657.24" x2="1193.5" y2="1657.24" stroke="#f1f1f1" stroke-width="1"/><line x1="708.4" y1="1645.41" x2="1193.5" y2="1645.41" stroke="#f1f1f1" stroke-width="1"/><line x1="708.4" y1="1633.57" x2="1193.5" y2="1633.57" stroke="#f1f1f1" stroke-width="1"/><line x1="708.4" y1="1621.74" x2="1193.5" y2="1621.74" stroke="#f1f1f1" stroke-width="1"/><line x1="708.4" y1="1609.91" x2="1193.5" y2="1609.91" stroke="#f1f1f1" stroke-width="1"/><line x1="708.4" y1="1598.08" x2="1193.5" y2="1598.08" stroke="#f1f1f1" stroke-width="1"/><line x1="708.4" y1="1586.24" x2="1193.5" y2="1586.24" stroke="#f1f1f1" stroke-width="1"/><line x1="708.4" y1="1574.41" x2="1193.5" y2="1574.41" stroke="#f1f1f1" stroke-width="1"/><line x1="717.40" y1="1561.4" x2="717.40" y2="1722.4" stroke="#f5f5f5" stroke-width="1"/><line x1="747.16" y1="1561.4" x2="747.16" y2="1722.4" stroke="#f5f5f5" stroke-width="1"/><line x1="776.91" y1="1561.4" x2="776.91" y2="1722.4" stroke="#f5f5f5" stroke-width="1"/><line x1="806.67" y1="1561.4" x2="806.67" y2="1722.4" stroke="#f5f5f5" stroke-width="1"/><line x1="836.42" y1="1561.4" x2="836.42" y2="1722.4" stroke="#f5f5f5" stroke-width="1"/><line x1="866.18" y1="1561.4" x2="866.18" y2="1722.4" stroke="#f5f5f5" stroke-width="1"/><line x1="895.94" y1="1561.4" x2="895.94" y2="1722.4" stroke="#f5f5f5" stroke-width="1"/><line x1="925.69" y1="1561.4" x2="925.69" y2="1722.4" stroke="#f5f5f5" stroke-width="1"/><line x1="955.45" y1="1561.4" x2="955.45" y2="1722.4" stroke="#f5f5f5" stroke-width="1"/><line x1="985.21" y1="1561.4" x2="985.21" y2="1722.4" stroke="#f5f5f5" stroke-width="1"/><line x1="1014.96" y1="1561.4" x2="1014.96" y2="1722.4" stroke="#f5f5f5" stroke-width="1"/><line x1="1044.72" y1="1561.4" x2="1044.72" y2="1722.4" stroke="#f5f5f5" stroke-width="1"/><line x1="1074.47" y1="1561.4" x2="1074.47" y2="1722.4" stroke="#f5f5f5" stroke-width="1"/><line x1="1104.23" y1="1561.4" x2="1104.23" y2="1722.4" stroke="#f5f5f5" stroke-width="1"/><line x1="1133.99" y1="1561.4" x2="1133.99" y2="1722.4" stroke="#f5f5f5" stroke-width="1"/><line x1="1163.74" y1="1561.4" x2="1163.74" y2="1722.4" stroke="#f5f5f5" stroke-width="1"/><line x1="1193.50" y1="1561.4" x2="1193.50" y2="1722.4" stroke="#f5f5f5" stroke-width="1"/><rect x="725.29" y="1706.48" width="13.99" height="9.92" fill="#3a6697"/><rect x="755.04" y="1705.42" width="13.99" height="10.98" fill="#3a6697"/><rect x="784.80" y="1565.40" width="13.99" height="151.00" fill="#3a6697"/><rect x="814.55" y="1713.97" width="13.99" height="2.43" fill="#3a6697"/><rect x="844.31" y="1692.80" width="13.99" height="23.60" fill="#3a6697"/><rect x="903.82" y="1713.21" width="13.99" height="3.19" fill="#3a6697"/><rect x="1052.60" y="1716.04" width="13.99" height="0.36" fill="#3a6697"/><rect x="1112.12" y="1670.74" width="13.99" height="45.66" fill="#3a6697"/><rect x="1141.87" y="1713.97" width="13.99" height="2.43" fill="#3a6697"/><rect x="1171.63" y="1711.24" width="13.99" height="5.16" fill="#3a6697"/></svg>
<div class="t" style="left:699.24px;top:1712.47px;font-size:9.00px;color:#6f7075;">0</div>
<div class="t" style="left:689.23px;top:1700.64px;font-size:9.00px;color:#6f7075;">390</div>
<div class="t" style="left:689.23px;top:1688.80px;font-size:9.00px;color:#6f7075;">780</div>
<div class="t" style="left:684.89px;top:1676.97px;font-size:9.00px;color:#6f7075;">1170</div>
<div class="t" style="left:684.23px;top:1665.14px;font-size:9.00px;color:#6f7075;">1560</div>
<div class="t" style="left:684.23px;top:1653.31px;font-size:9.00px;color:#6f7075;">1950</div>
<div class="t" style="left:684.23px;top:1641.47px;font-size:9.00px;color:#6f7075;">2340</div>
<div class="t" style="left:684.23px;top:1629.64px;font-size:9.00px;color:#6f7075;">2730</div>
<div class="t" style="left:684.23px;top:1617.81px;font-size:9.00px;color:#6f7075;">3120</div>
<div class="t" style="left:684.23px;top:1605.98px;font-size:9.00px;color:#6f7075;">3510</div>
<div class="t" style="left:684.23px;top:1594.14px;font-size:9.00px;color:#6f7075;">3900</div>
<div class="t" style="left:684.23px;top:1582.31px;font-size:9.00px;color:#6f7075;">4290</div>
<div class="t" style="left:684.23px;top:1570.48px;font-size:9.00px;color:#6f7075;">4680</div>
<div class="t" style="left:698.18px;top:1722.40px;font-size:8.9px;color:#97989d;transform-origin:100% 50%;transform:rotate(-45deg)">Athletic F</div>
<div class="t" style="left:728.92px;top:1722.40px;font-size:8.9px;color:#97989d;transform-origin:100% 50%;transform:rotate(-45deg)">Cafeteria</div>
<div class="t" style="left:752.26px;top:1722.40px;font-size:8.9px;color:#97989d;transform-origin:100% 50%;transform:rotate(-45deg)">Classroom</div>
<div class="t" style="left:777.07px;top:1722.40px;font-size:8.9px;color:#97989d;transform-origin:100% 50%;transform:rotate(-45deg)">Gymnasium</div>
<div class="t" style="left:823.14px;top:1722.40px;font-size:8.9px;color:#97989d;transform-origin:100% 50%;transform:rotate(-45deg)">Hallway</div>
<div class="t" style="left:844.98px;top:1722.40px;font-size:8.9px;color:#97989d;transform-origin:100% 50%;transform:rotate(-45deg)">Internet/D</div>
<div class="t" style="left:886.61px;top:1722.40px;font-size:8.9px;color:#97989d;transform-origin:100% 50%;transform:rotate(-45deg)">Library</div>
<div class="t" style="left:898.06px;top:1722.40px;font-size:8.9px;color:#97989d;transform-origin:100% 50%;transform:rotate(-45deg)">Locker Roo</div>
<div class="t" style="left:926.01px;top:1722.40px;font-size:8.9px;color:#97989d;transform-origin:100% 50%;transform:rotate(-45deg)">Off Campus</div>
<div class="t" style="left:955.76px;top:1722.40px;font-size:8.9px;color:#97989d;transform-origin:100% 50%;transform:rotate(-45deg)">Off Campus</div>
<div class="t" style="left:985.52px;top:1722.40px;font-size:8.9px;color:#97989d;transform-origin:100% 50%;transform:rotate(-45deg)">Off Campus</div>
<div class="t" style="left:1039.51px;top:1722.40px;font-size:8.9px;color:#97989d;transform-origin:100% 50%;transform:rotate(-45deg)">Office</div>
<div class="t" style="left:1049.80px;top:1722.40px;font-size:8.9px;color:#97989d;transform-origin:100% 50%;transform:rotate(-45deg)">Parking Lo</div>
<div class="t" style="left:1077.08px;top:1722.40px;font-size:8.9px;color:#97989d;transform-origin:100% 50%;transform:rotate(-45deg)">Playground</div>
<div class="t" style="left:1113.29px;top:1722.40px;font-size:8.9px;color:#97989d;transform-origin:100% 50%;transform:rotate(-45deg)">Restroom</div>
<div class="t" style="left:1136.60px;top:1722.40px;font-size:8.9px;color:#97989d;transform-origin:100% 50%;transform:rotate(-45deg)">School Bus</div>
<div class="t" style="left:723.69px;top:1700.83px;font-size:10.3px;font-weight:bold;color:#15161a;line-height:10.3px;transform:rotate(-90deg)">327</div>
<div class="t" style="left:753.44px;top:1699.77px;font-size:10.3px;font-weight:bold;color:#15161a;line-height:10.3px;transform:rotate(-90deg)">362</div>
<div class="t" style="left:842.71px;top:1687.15px;font-size:10.3px;font-weight:bold;color:#15161a;line-height:10.3px;transform:rotate(-90deg)">778</div>
<div class="t" style="left:1105.32px;top:1665.09px;font-size:10.3px;font-weight:bold;color:#15161a;line-height:10.3px;transform:rotate(-90deg)">1<span style="display:inline-block;width:4.7px"></span>505</div>
<div style="position:absolute;left:681.6px;top:1766.6000000000001px;width:10.6px;height:10.6px;border-radius:50%;background:#3a6697"></div>
<div class="t" style="left:699.01px;top:1766.89px;font-size:11.34px;color:#2b2c31;font-weight:bold;letter-spacing:0.810px;">2020-2021</div>
<div style="position:absolute;left:1277px;top:1484.5px;width:575px;height:312.9000000000001px;background:#fff;border:1.5px solid #dcdde0;border-radius:3px;box-sizing:border-box;box-shadow:0 1px 1px rgba(0,0,0,0.04)"></div>
<div style="position:absolute;left:1278.5px;top:1532.0px;width:572.0px;height:1.5px;background:#e1e2e5"></div>
<div class="t" style="left:1292.31px;top:1498.90px;font-size:16.28px;color:#85868b;transform:scaleX(0.9693);transform-origin:0 0;">By School</div>
<svg style="position:absolute;left:0;top:0" width="2560" height="1853"><g fill="#72747c"><path d="M1730.5 1499.5 H1739.5 V1501.3 H1738.2 L1739.2 1506.3 L1741 1508.1 V1509.5 H1729 V1508.1 L1730.8 1506.3 L1731.8 1501.3 H1730.5 Z"/><rect x="1734.2" y="1509.0" width="1.6" height="5.3"/><path d="M1774.5 1514.0 L1774.5 1508.5 L1780.0 1514.0 Z M1788.5 1500.0 L1783.0 1500.0 L1788.5 1505.5 Z"/><path d="M1776.5 1512.0 L1786.5 1502.0" stroke="#72747c" stroke-width="1.7" stroke-dasharray="3.2 1.6"/><circle cx="1828" cy="1501.7" r="1.6"/><circle cx="1828" cy="1507.0" r="1.6"/><circle cx="1828" cy="1512.6" r="1.6"/></g><path d="M1820.4 1549.8 L1825.8 1554.7 L1831.2 1549.8" fill="none" stroke="#72747c" stroke-width="1.6" stroke-linecap="round" stroke-linejoin="round"/></svg>
<div class="t" style="left:1714.13px;top:1541.31px;font-size:17.44px;color:#6f7075;letter-spacing:1.413px;-webkit-text-stroke:0.45px #6f7075;">2020-2021</div>
<svg style="position:absolute;left:0;top:0" width="2560" height="1853"><line x1="1322" y1="1716.40" x2="1806" y2="1716.40" stroke="#f1f1f1" stroke-width="1"/><line x1="1322" y1="1704.86" x2="1806" y2="1704.86" stroke="#f1f1f1" stroke-width="1"/><line x1="1322" y1="1693.32" x2="1806" y2="1693.32" stroke="#f1f1f1" stroke-width="1"/><line x1="1322" y1="1681.78" x2="1806" y2="1681.78" stroke="#f1f1f1" stroke-width="1"/><line x1="1322" y1="1670.23" x2="1806" y2="1670.23" stroke="#f1f1f1" stroke-width="1"/><line x1="1322" y1="1658.69" x2="1806" y2="1658.69" stroke="#f1f1f1" stroke-width="1"/><line x1="1322" y1="1647.15" x2="1806" y2="1647.15" stroke="#f1f1f1" stroke-width="1"/><line x1="1322" y1="1635.61" x2="1806" y2="1635.61" stroke="#f1f1f1" stroke-width="1"/><line x1="1322" y1="1624.07" x2="1806" y2="1624.07" stroke="#f1f1f1" stroke-width="1"/><line x1="1322" y1="1612.53" x2="1806" y2="1612.53" stroke="#f1f1f1" stroke-width="1"/><line x1="1322" y1="1600.99" x2="1806" y2="1600.99" stroke="#f1f1f1" stroke-width="1"/><line x1="1322" y1="1589.44" x2="1806" y2="1589.44" stroke="#f1f1f1" stroke-width="1"/><line x1="1322" y1="1577.90" x2="1806" y2="1577.90" stroke="#f1f1f1" stroke-width="1"/><line x1="1322" y1="1566.36" x2="1806" y2="1566.36" stroke="#f1f1f1" stroke-width="1"/><line x1="1331.00" y1="1561.4" x2="1331.00" y2="1722.4" stroke="#f5f5f5" stroke-width="1"/><line x1="1358.94" y1="1561.4" x2="1358.94" y2="1722.4" stroke="#f5f5f5" stroke-width="1"/><line x1="1386.88" y1="1561.4" x2="1386.88" y2="1722.4" stroke="#f5f5f5" stroke-width="1"/><line x1="1414.82" y1="1561.4" x2="1414.82" y2="1722.4" stroke="#f5f5f5" stroke-width="1"/><line x1="1442.76" y1="1561.4" x2="1442.76" y2="1722.4" stroke="#f5f5f5" stroke-width="1"/><line x1="1470.71" y1="1561.4" x2="1470.71" y2="1722.4" stroke="#f5f5f5" stroke-width="1"/><line x1="1498.65" y1="1561.4" x2="1498.65" y2="1722.4" stroke="#f5f5f5" stroke-width="1"/><line x1="1526.59" y1="1561.4" x2="1526.59" y2="1722.4" stroke="#f5f5f5" stroke-width="1"/><line x1="1554.53" y1="1561.4" x2="1554.53" y2="1722.4" stroke="#f5f5f5" stroke-width="1"/><line x1="1582.47" y1="1561.4" x2="1582.47" y2="1722.4" stroke="#f5f5f5" stroke-width="1"/><line x1="1610.41" y1="1561.4" x2="1610.41" y2="1722.4" stroke="#f5f5f5" stroke-width="1"/><line x1="1638.35" y1="1561.4" x2="1638.35" y2="1722.4" stroke="#f5f5f5" stroke-width="1"/><line x1="1666.29" y1="1561.4" x2="1666.29" y2="1722.4" stroke="#f5f5f5" stroke-width="1"/><line x1="1694.24" y1="1561.4" x2="1694.24" y2="1722.4" stroke="#f5f5f5" stroke-width="1"/><line x1="1722.18" y1="1561.4" x2="1722.18" y2="1722.4" stroke="#f5f5f5" stroke-width="1"/><line x1="1750.12" y1="1561.4" x2="1750.12" y2="1722.4" stroke="#f5f5f5" stroke-width="1"/><line x1="1778.06" y1="1561.4" x2="1778.06" y2="1722.4" stroke="#f5f5f5" stroke-width="1"/><line x1="1806.00" y1="1561.4" x2="1806.00" y2="1722.4" stroke="#f5f5f5" stroke-width="1"/><rect x="1338.40" y="1669.18" width="13.13" height="47.22" fill="#3a6697"/><rect x="1366.35" y="1565.40" width="13.13" height="151.00" fill="#3a6697"/><rect x="1422.23" y="1685.14" width="13.13" height="31.26" fill="#3a6697"/><rect x="1450.17" y="1683.31" width="13.13" height="33.09" fill="#3a6697"/><rect x="1478.11" y="1701.88" width="13.13" height="14.52" fill="#3a6697"/><rect x="1506.05" y="1637.34" width="13.13" height="79.06" fill="#3a6697"/><rect x="1533.99" y="1624.74" width="13.13" height="91.66" fill="#3a6697"/><rect x="1561.93" y="1701.20" width="13.13" height="15.20" fill="#3a6697"/><rect x="1589.88" y="1667.45" width="13.13" height="48.95" fill="#3a6697"/><rect x="1617.82" y="1652.73" width="13.13" height="63.67" fill="#3a6697"/><rect x="1645.76" y="1665.91" width="13.13" height="50.49" fill="#3a6697"/><rect x="1673.70" y="1661.39" width="13.13" height="55.01" fill="#3a6697"/><rect x="1701.64" y="1708.80" width="13.13" height="7.60" fill="#3a6697"/><rect x="1729.58" y="1673.79" width="13.13" height="42.61" fill="#3a6697"/><rect x="1757.52" y="1657.92" width="13.13" height="58.48" fill="#3a6697"/><rect x="1785.46" y="1666.48" width="13.13" height="49.92" fill="#3a6697"/></svg>
<div class="t" style="left:1312.84px;top:1712.47px;font-size:9.00px;color:#6f7075;">0</div>
<div class="t" style="left:1302.83px;top:1700.93px;font-size:9.00px;color:#6f7075;">120</div>
<div class="t" style="left:1302.83px;top:1689.39px;font-size:9.00px;color:#6f7075;">240</div>
<div class="t" style="left:1302.83px;top:1677.84px;font-size:9.00px;color:#6f7075;">360</div>
<div class="t" style="left:1302.83px;top:1666.30px;font-size:9.00px;color:#6f7075;">480</div>
<div class="t" style="left:1302.83px;top:1654.76px;font-size:9.00px;color:#6f7075;">600</div>
<div class="t" style="left:1302.83px;top:1643.22px;font-size:9.00px;color:#6f7075;">720</div>
<div class="t" style="left:1302.83px;top:1631.68px;font-size:9.00px;color:#6f7075;">840</div>
<div class="t" style="left:1302.83px;top:1620.14px;font-size:9.00px;color:#6f7075;">960</div>
<div class="t" style="left:1297.83px;top:1608.60px;font-size:9.00px;color:#6f7075;">1080</div>
<div class="t" style="left:1297.83px;top:1597.05px;font-size:9.00px;color:#6f7075;">1200</div>
<div class="t" style="left:1297.83px;top:1585.51px;font-size:9.00px;color:#6f7075;">1320</div>
<div class="t" style="left:1297.83px;top:1573.97px;font-size:9.00px;color:#6f7075;">1440</div>
<div class="t" style="left:1297.83px;top:1562.43px;font-size:9.00px;color:#6f7075;">1560</div>
<div class="t" style="left:1298.02px;top:1722.40px;font-size:8.9px;color:#97989d;transform-origin:100% 50%;transform:rotate(-45deg)">Dewey Elem</div>
<div class="t" style="left:1330.41px;top:1722.40px;font-size:8.9px;color:#97989d;transform-origin:100% 50%;transform:rotate(-45deg)">DuFour Hig</div>
<div class="t" style="left:1354.39px;top:1722.40px;font-size:8.9px;color:#97989d;transform-origin:100% 50%;transform:rotate(-45deg)">Dweck Spec</div>
<div class="t" style="left:1392.71px;top:1722.40px;font-size:8.9px;color:#97989d;transform-origin:100% 50%;transform:rotate(-45deg)">Escalante</div>
<div class="t" style="left:1416.70px;top:1722.40px;font-size:8.9px;color:#97989d;transform-origin:100% 50%;transform:rotate(-45deg)">Gardner El</div>
<div class="t" style="left:1445.63px;top:1722.40px;font-size:8.9px;color:#97989d;transform-origin:100% 50%;transform:rotate(-45deg)">Grandin El</div>
<div class="t" style="left:1480.50px;top:1722.40px;font-size:8.9px;color:#97989d;transform-origin:100% 50%;transform:rotate(-45deg)">Hattie Jr.</div>
<div class="t" style="left:1498.05px;top:1722.40px;font-size:8.9px;color:#97989d;transform-origin:100% 50%;transform:rotate(-45deg)">Marzano Hi</div>
<div class="t" style="left:1526.00px;top:1722.40px;font-size:8.9px;color:#97989d;transform-origin:100% 50%;transform:rotate(-45deg)">Maslow Ele</div>
<div class="t" style="left:1563.00px;top:1722.40px;font-size:8.9px;color:#97989d;transform-origin:100% 50%;transform:rotate(-45deg)">McAuliffe</div>
<div class="t" style="left:1577.42px;top:1722.40px;font-size:8.9px;color:#97989d;transform-origin:100% 50%;transform:rotate(-45deg)">Mead Eleme</div>
<div class="t" style="left:1607.34px;top:1722.40px;font-size:8.9px;color:#97989d;transform-origin:100% 50%;transform:rotate(-45deg)">Peake Elem</div>
<div class="t" style="left:1642.69px;top:1722.40px;font-size:8.9px;color:#97989d;transform-origin:100% 50%;transform:rotate(-45deg)">Piaget Ele</div>
<div class="t" style="left:1662.23px;top:1722.40px;font-size:8.9px;color:#97989d;transform-origin:100% 50%;transform:rotate(-45deg)">Reeves Con</div>
<div class="t" style="left:1699.57px;top:1722.40px;font-size:8.9px;color:#97989d;transform-origin:100% 50%;transform:rotate(-45deg)">Sullivan E</div>
<div class="t" style="left:1725.05px;top:1722.40px;font-size:8.9px;color:#97989d;transform-origin:100% 50%;transform:rotate(-45deg)">Wiggins El</div>
<div class="t" style="left:1757.95px;top:1722.40px;font-size:8.9px;color:#97989d;transform-origin:100% 50%;transform:rotate(-45deg)">Willard Jr</div>
<div class="t" style="left:1336.38px;top:1663.53px;font-size:10.3px;font-weight:bold;color:#15161a;line-height:10.3px;transform:rotate(-90deg)">491</div>
<div class="t" style="left:1420.20px;top:1679.49px;font-size:10.3px;font-weight:bold;color:#15161a;line-height:10.3px;transform:rotate(-90deg)">325</div>
<div class="t" style="left:1448.14px;top:1677.66px;font-size:10.3px;font-weight:bold;color:#15161a;line-height:10.3px;transform:rotate(-90deg)">344</div>
<div class="t" style="left:1476.08px;top:1696.23px;font-size:10.3px;font-weight:bold;color:#15161a;line-height:10.3px;transform:rotate(-90deg)">151</div>
<div class="t" style="left:1504.03px;top:1631.69px;font-size:10.3px;font-weight:bold;color:#15161a;line-height:10.3px;transform:rotate(-90deg)">822</div>
<div class="t" style="left:1531.97px;top:1619.09px;font-size:10.3px;font-weight:bold;color:#15161a;line-height:10.3px;transform:rotate(-90deg)">953</div>
<div class="t" style="left:1559.91px;top:1695.55px;font-size:10.3px;font-weight:bold;color:#15161a;line-height:10.3px;transform:rotate(-90deg)">158</div>
<div class="t" style="left:1587.85px;top:1661.80px;font-size:10.3px;font-weight:bold;color:#15161a;line-height:10.3px;transform:rotate(-90deg)">509</div>
<div class="t" style="left:1615.79px;top:1647.08px;font-size:10.3px;font-weight:bold;color:#15161a;line-height:10.3px;transform:rotate(-90deg)">662</div>
<div class="t" style="left:1643.73px;top:1660.26px;font-size:10.3px;font-weight:bold;color:#15161a;line-height:10.3px;transform:rotate(-90deg)">525</div>
<div class="t" style="left:1671.67px;top:1655.74px;font-size:10.3px;font-weight:bold;color:#15161a;line-height:10.3px;transform:rotate(-90deg)">572</div>
<div class="t" style="left:1702.48px;top:1703.15px;font-size:10.3px;font-weight:bold;color:#15161a;line-height:10.3px;transform:rotate(-90deg)">79</div>
<div class="t" style="left:1727.55px;top:1668.14px;font-size:10.3px;font-weight:bold;color:#15161a;line-height:10.3px;transform:rotate(-90deg)">443</div>
<div class="t" style="left:1755.50px;top:1652.27px;font-size:10.3px;font-weight:bold;color:#15161a;line-height:10.3px;transform:rotate(-90deg)">608</div>
<div class="t" style="left:1783.44px;top:1660.83px;font-size:10.3px;font-weight:bold;color:#15161a;line-height:10.3px;transform:rotate(-90deg)">519</div>
<div style="position:absolute;left:1295.2px;top:1766.6000000000001px;width:10.6px;height:10.6px;border-radius:50%;background:#3a6697"></div>
<div class="t" style="left:1312.61px;top:1766.89px;font-size:11.34px;color:#2b2c31;font-weight:bold;letter-spacing:0.810px;">2020-2021</div>
</body></html>
